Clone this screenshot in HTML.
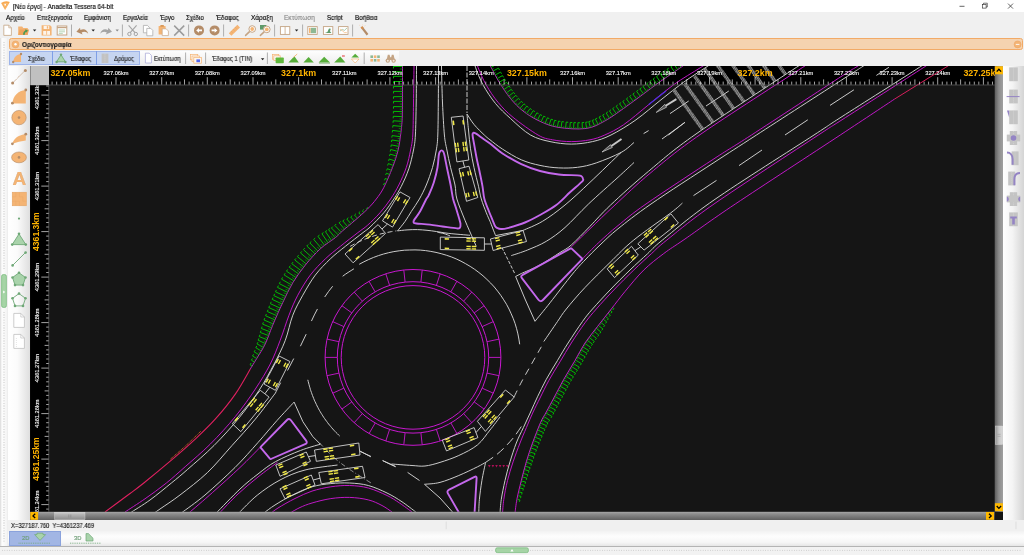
<!DOCTYPE html>
<html lang="el">
<head>
<meta charset="utf-8">
<title>[Νέο έργο] - Anadelta Tessera 64-bit</title>
<style>
html,body{margin:0;padding:0;}
body{width:1024px;height:555px;position:relative;overflow:hidden;background:#f0f0f0;font-family:"Liberation Sans",sans-serif;font-size:6.5px;color:#111;}
.abs{position:absolute;}
.t{position:absolute;white-space:nowrap;line-height:1;transform-origin:0 0;will-change:transform;-webkit-text-stroke:0.14px currentColor;}
#title{left:0;top:0;width:1024px;height:12px;background:#fff;}
#menu{left:0;top:12px;width:1024px;height:11px;background:#f0f0f0;}
#tool{left:0;top:23px;width:1024px;height:15px;background:#f0f0f0;}
.sep{position:absolute;width:1px;background:#8a8a8a;}
#orange{left:9px;top:38px;width:1014px;height:11.5px;background:#f5d3b0;border:1px solid #f2aa66;border-radius:2.5px;box-sizing:border-box;}
#tabs{left:9px;top:51px;width:390px;height:14.5px;background:linear-gradient(#fdfdfd,#ececec);}
#tabsel{left:9.3px;top:50.8px;width:130.4px;height:14.6px;background:#c6d5f1;border:0.6px solid #9db4ea;box-sizing:border-box;}
.tdiv{top:51px;width:0.8px;height:14.2px;background:#7f9fe6;}
#tab2d{left:9px;top:530.5px;width:52px;height:15.2px;background:#a2b6e4;border:0.6px solid #8aa2dc;box-sizing:border-box;}
#lgrip{left:0;top:38px;width:8px;height:508px;background:linear-gradient(90deg,#d8d8d8 0,#fdfdfd 2px,#f4f4f4 7px,#e8e8e8 8px);}
#ltool{left:8px;top:66px;width:22.5px;height:454px;background:linear-gradient(90deg,#fff 0,#fbfbfb 40%,#dcdcdc 100%);}
#rpanel{left:1003px;top:66px;width:21px;height:454px;background:linear-gradient(90deg,#fff 0,#f4f4f4 45%,#d4d4d4 100%);}
#canvas{left:30px;top:66px;width:973px;height:454px;background:#151515;}
#status{left:8px;top:520px;width:1016px;height:10.5px;background:#f0f0f0;}
#btabs{left:8px;top:530.5px;width:1016px;height:15.5px;background:linear-gradient(#f2f2f2 0,#fdfdfd 35%,#f6f6f6 75%,#e6e6e6 100%);}
#bottom{left:0;top:546px;width:1024px;height:9px;background:#f2f2f2;border-top:1px solid #b4b4b4;box-sizing:border-box;}
</style>
</head>
<body>
<div id="title" class="abs"></div>
<div id="menu" class="abs"></div>
<div id="tool" class="abs"></div>
<div id="orange" class="abs"></div>
<div id="tabs" class="abs"></div>
<div id="tabsel" class="abs"></div><div class="abs tdiv" style="left:52px"></div><div class="abs tdiv" style="left:96px"></div>
<div id="lgrip" class="abs"></div>
<div id="ltool" class="abs"></div>
<div id="rpanel" class="abs"></div>
<div id="canvas" class="abs"></div>
<div id="status" class="abs"></div>
<div id="btabs" class="abs"></div>
<div id="tab2d" class="abs"></div>
<div id="bottom" class="abs"></div>
<span class="t" style="left:12.6px;top:3.7px;font-size:6.6px;color:#000;font-weight:normal;transform:scaleX(0.950);white-space:pre">[Νέο έργο] - Anadelta Tessera 64-bit</span>
<span class="t" style="left:6.3px;top:15.1px;font-size:6.5px;color:#000;font-weight:normal;transform:scaleX(0.964);white-space:pre">Αρχείο</span>
<span class="t" style="left:36.8px;top:15.1px;font-size:6.5px;color:#000;font-weight:normal;transform:scaleX(0.940);white-space:pre">Επεξεργασία</span>
<span class="t" style="left:83.8px;top:15.1px;font-size:6.5px;color:#000;font-weight:normal;transform:scaleX(0.952);white-space:pre">Εμφάνιση</span>
<span class="t" style="left:123.3px;top:15.1px;font-size:6.5px;color:#000;font-weight:normal;transform:scaleX(0.936);white-space:pre">Εργαλεία</span>
<span class="t" style="left:160.0px;top:15.1px;font-size:6.5px;color:#000;font-weight:normal;transform:scaleX(0.912);white-space:pre">Έργο</span>
<span class="t" style="left:186.3px;top:15.1px;font-size:6.5px;color:#000;font-weight:normal;transform:scaleX(0.931);white-space:pre">Σχέδιο</span>
<span class="t" style="left:216.0px;top:15.1px;font-size:6.5px;color:#000;font-weight:normal;transform:scaleX(0.973);white-space:pre">Έδαφος</span>
<span class="t" style="left:250.5px;top:15.1px;font-size:6.5px;color:#000;font-weight:normal;transform:scaleX(0.987);white-space:pre">Χάραξη</span>
<span class="t" style="left:283.5px;top:15.1px;font-size:6.5px;color:#8c8c8c;font-weight:normal;transform:scaleX(1.006);white-space:pre">Εκτύπωση</span>
<span class="t" style="left:326.8px;top:15.1px;font-size:6.5px;color:#000;font-weight:normal;transform:scaleX(0.944);white-space:pre">Script</span>
<span class="t" style="left:354.5px;top:15.1px;font-size:6.5px;color:#000;font-weight:normal;transform:scaleX(0.966);white-space:pre">Βοήθεια</span>
<span class="t" style="left:22.0px;top:41.6px;font-size:6.6px;color:#1a1a1a;font-weight:bold;transform:scaleX(0.941);white-space:pre">Οριζοντιογραφία</span>
<span class="t" style="left:27.8px;top:56.1px;font-size:6.3px;color:#222;font-weight:normal;transform:scaleX(0.907);white-space:pre">Σχέδιο</span>
<span class="t" style="left:69.5px;top:56.1px;font-size:6.3px;color:#222;font-weight:normal;transform:scaleX(0.924);white-space:pre">Έδαφος</span>
<span class="t" style="left:114.0px;top:56.1px;font-size:6.3px;color:#222;font-weight:normal;transform:scaleX(0.922);white-space:pre">Δρόμος</span>
<span class="t" style="left:154.0px;top:56.1px;font-size:6.3px;color:#222;font-weight:normal;transform:scaleX(0.891);white-space:pre">Εκτύπωση</span>
<span class="t" style="left:212.3px;top:56.1px;font-size:6.3px;color:#222;font-weight:normal;transform:scaleX(0.913);white-space:pre">Έδαφος 1 (TIN)</span>
<span class="t" style="left:10.7px;top:523.4px;font-size:6.5px;color:#111;font-weight:normal;transform:scaleX(0.903);white-space:pre">X=327187.760  Y=4361237.469</span>
<span class="t" style="left:21.8px;top:536.1px;font-size:5.6px;color:#6c9c74;font-weight:normal;transform:scaleX(1.034);white-space:pre">2D</span>
<span class="t" style="left:73.5px;top:536.1px;font-size:5.6px;color:#6c9c74;font-weight:normal;transform:scaleX(1.048);white-space:pre">3D</span>
<svg class="abs" style="left:0;top:0;will-change:transform" width="1024" height="555" viewBox="0 0 1024 555" font-family="Liberation Sans, sans-serif">
<rect x="49" y="66" width="945.7" height="19.2" fill="#000"/>
<rect x="30.3" y="85" width="18.7" height="426.7" fill="#000"/>
<rect x="30.3" y="66" width="18.7" height="19.2" fill="#c0c0c0"/>
<clipPath id="cv"><rect x="49" y="66" width="945.7" height="445.8"/></clipPath>
<g clip-path="url(#cv)" fill="none" stroke-linecap="butt">
<circle cx="413.0" cy="357.4" r="87.9" stroke="#c818d0" stroke-width="1"/>
<circle cx="413.0" cy="357.4" r="75.7" stroke="#c818d0" stroke-width="1"/>
<circle cx="413.0" cy="357.4" r="71.8" stroke="#c818d0" stroke-width="1"/>
<path d="M420.9 282.1L422.2 270M436.4 285.4L440.2 273.8M450.9 291.8L456.9 281.3M463.7 301.1L471.8 292.1M474.2 312.9L484.1 305.7M482.2 326.6L493.3 321.6M487 341.7L499 339.1M488.7 357.4L500.9 357.4M487 373.1L499 375.7M482.2 388.2L493.3 393.2M474.2 401.9L484.1 409.1M463.7 413.7L471.8 422.7M450.9 423L456.9 433.5M436.4 429.4L440.2 441M420.9 432.7L422.2 444.8M405.1 432.7L403.8 444.8M389.6 429.4L385.8 441M375.2 423L369.1 433.5M362.3 413.7L354.2 422.7M351.8 401.9L341.9 409.1M343.8 388.2L332.7 393.2M339 373.1L327 375.7M337.3 357.4L325.1 357.4M339 341.7L327 339.1M343.8 326.6L332.7 321.6M351.8 312.9L341.9 305.7M362.3 301.1L354.2 292.1M375.1 291.8L369 281.3M389.6 285.4L385.8 273.8M405.1 282.1L403.8 270" stroke="#c818d0" stroke-width="0.9" fill="none" />
<path d="M359.2 264.3 L363.9 261.8 L368.7 259.5 L373.6 257.4 L378.5 255.6 L383.6 254 L388.7 252.7 L393.9 251.6 L399.2 250.8 L404.4 250.2 L409.7 250 L415 249.9 L420.3 250.1 L425.6 250.6 L430.8 251.4 L436 252.4 L441.2 253.7 L446.3 255.2 L451.3 256.9 L456.2 258.9 L461 261.2 L465.6 263.7 L470.2 266.4 L474.6 269.3 L478.9 272.5 L483 275.8 L486.9 279.4 L490.7 283.1 L494.3 287 L497.6 291.1 L500.8 295.4 L503.7 299.8 L506.5 304.3 L509 309 L511.2 313.8 L513.3 318.7 L515.1 323.6 L516.6 328.7 L517.9 333.9 L518.9 339.1 L519.7 344.3" stroke="#d4d4d4" stroke-width="0.95" fill="none" />
<path d="M307.8 379.8 L308.2 381.4 L308.6 383 L309 384.5 L309.4 386.1 L309.9 387.7 L310.3 389.3 L310.8 390.8 L311.4 392.4 L311.9 393.9 L312.5 395.5 L313.1 397 L313.7 398.5 L314.3 400.1 L315 401.6 L315.7 403 L316.4 404.5 L317.1 406 L317.9 407.5 L318.6 408.9 L319.4 410.3 L320.3 411.8 L321.1 413.2 L322 414.6 L322.8 415.9 L323.7 417.3 L324.7 418.7 L325.6 420 L326.6 421.3 L327.6 422.7 L328.6 424 L329.6 425.2 L330.7 426.5 L331.7 427.7 L332.8 429 L333.9 430.2 L335 431.4 L336.2 432.6 L337.3 433.7 L338.5 434.9 L339.7 436" stroke="#d4d4d4" stroke-width="0.95" fill="none" />
<path d="M353.9 268.8 C352 270.1 346.2 273.4 342.6 276.3 C339.1 279.2 335.7 282.8 332.6 286.3 C329.6 289.9 326.8 293.8 324.3 297.6 C321.8 301.4 319.7 304.9 317.5 308.9 C315.3 312.9 313.2 317.1 311.3 321.4 C309.4 325.7 307.9 330.2 306 334.5 C304.1 338.8 302.1 342.9 300 347 C297.9 351.1 295.6 355.1 293.5 359 C291.4 362.9 289.6 366.7 287.5 370.5 C285.4 374.3 283 378.2 281 382 C279 385.8 276.3 391.2 275.4 393.1" stroke="#d4d4d4" stroke-width="0.95" fill="none" stroke-dasharray="13.5 14"/>
<path d="M402.5 55 C402.5 60.2 402.5 75.8 402.5 86 C402.5 96.2 402.5 108.7 402.3 116 C402.1 123.3 401.5 126.8 401.2 130 C400.9 133.2 401.1 131.7 400.6 135 C400.1 138.3 399.5 144.6 398.1 150 C396.8 155.4 394.9 161.2 392.5 167.5 C390.1 173.8 386.5 182.2 383.8 187.5 C381.1 192.8 379 195.4 376.3 199 C373.6 202.6 371.1 205.4 367.5 209 C363.9 212.6 359.2 216.7 355 220.3 C350.8 224 345.8 228 342.5 230.9 C339.2 233.8 339.1 234.6 335.4 237.6 C331.7 240.6 325.3 244.2 320.3 248.8 C315.3 253.4 309.9 259.5 305.3 265.1 C300.7 270.8 296.6 276.4 292.8 282.7 C289 289 286.1 295.6 282.7 302.7 C279.3 309.8 275.6 318.3 272.7 325.2 C269.8 332.1 267.8 338.5 265.2 344 C262.6 349.5 259.5 353.8 257 358 C254.5 362.2 251.4 367.2 250.3 369" stroke="#c818d0" stroke-width="0.95" fill="none" />
<path d="M402.5 61.5L393.5 61.5L393.5 63.5M402.5 66.4L393.5 66.4L393.5 68.4M402.5 71.7L393.5 71.7L393.5 73.7M402.5 76.3L393.5 76.3L393.5 78.3M402.5 81.5L393.5 81.5L393.5 83.5M402.5 86.5L393.5 86.4L393.5 88.4M402.5 91.4L393.5 91.4L393.5 93.4M402.5 96.6L393.5 96.7L393.5 98.7M402.5 101.4L393.5 101.4L393.5 103.4M402.5 106.7L393.5 106.6L393.5 108.6M402.4 111.6L393.4 111.4L393.4 113.4M402.3 116.6L393.3 116.3L393.2 118.3M402 121.3L393.2 120.8L393 122.8M401.6 126.4L392.9 125.6L392.7 127.6M401 131.5L392.5 130.4L392.3 132.4M400.4 136.7L392.1 135.6L391.8 137.6M399.8 141.2L391.8 140L391.5 142M398.9 146.4L391.3 144.9L390.9 146.9M397.8 151.4L390.7 149.5L390.2 151.5M396.4 156L390.1 154.1L389.5 156M394.9 160.9L389.2 159L388.6 160.9M393.3 165.4L388.3 163.6L387.6 165.5M391.4 170.3L387.3 168.7L386.6 170.5M389.6 174.5L386.4 173.2L385.6 175M387.4 179.4L385.3 178.4L384.5 180.3M385.5 183.7L384.3 183.2L383.4 185" stroke="#00c400" stroke-width="0.95" fill="none"/><path d="M402.5 64.1L399.8 64.1M402.5 69L399.8 69M402.5 73.9L399.8 74M402.5 79.2L399.8 79.2M402.5 83.8L399.8 83.8M402.5 88.9L399.8 88.9M402.5 94L399.8 94M402.5 98.8L399.8 98.8M402.5 104.1L399.8 104.1M402.5 109.2L399.8 109.1M402.4 113.9L399.7 113.8M402.2 119.1L399.5 118.9M401.8 124L399.2 123.8M401.3 128.8L398.8 128.5M400.7 134.1L398.2 133.8M400.1 138.7L397.7 138.4M399.4 144L397 143.6M398.4 148.9L396.1 148.4M397.1 153.7L395.1 153.1M395.7 158.4L393.9 157.9M394.2 162.9L392.6 162.3M392.3 167.9L391 167.4M390.5 172.4L389.4 171.9M388.4 177.3L387.6 176.9M386.5 181.4L386 181.2M384.4 186.1L384.2 186" stroke="#00c400" stroke-width="0.8" fill="none" opacity="0.75"/>
<path d="M367.1 209.2L366.5 208.6L368 207.3M363.7 212.4L362.4 210.9L363.8 209.5M360.8 215.1L358.8 212.8L360.2 211.5M357.4 218.2L354.5 215.1L356 213.7M354.2 221L350.7 217L352.2 215.7M350.9 223.8L346.8 219L348.3 217.7M347.6 226.6L342.8 220.9L344.4 219.7M344.5 229.2L339.1 222.8L340.6 221.5M341.2 232.1L334.8 225.4L336.2 224M338.4 235L331.4 228L332.8 226.6M335.1 237.8L328.5 229.6L330.1 228.4M331.5 240.4L325.4 231.6L327 230.5M328.1 242.8L321.9 233.7L323.5 232.6M324.6 245.3L317.9 236.3L319.5 235.1M321.1 248.1L313.7 239.4L315.2 238.1M317.9 251.1L309.8 242.9L311.3 241.5M315.1 253.9L306.8 246L308.2 244.5M311.9 257.3L303.4 249.6L304.8 248.1M309.2 260.4L300.5 252.9L301.8 251.4M306.2 263.9L297.4 256.6L298.7 255.1M303.7 267.1L294.7 259.9L296 258.4M301 270.6L291.8 263.7L293 262.1M298.6 273.9L289.2 267.2L290.4 265.6M296 277.6L286.5 271.2L287.6 269.5M293.9 281L284.1 274.9L285.2 273.2M291.5 284.9L281.6 279.2L282.6 277.4M289.4 288.8L279.3 283.6L280.3 281.8M287.6 292.4L277.5 287.4L278.4 285.6M285.6 296.5L275.5 291.8L276.4 290M283.8 300.3L273.8 295.6L274.7 293.8M282.1 304L272.2 299.4L273 297.6M280.2 308.1L270.4 303.7L271.2 301.8M278.5 311.9L268.8 307.6L269.6 305.7M276.8 315.7L267.3 311.5L268.1 309.7M275 319.9L265.6 315.8L266.4 314M273.2 323.9L264 320L264.8 318.1M271.6 327.8L262.6 324.1L263.4 322.3M270.1 331.8L261.4 328.5L262.1 326.6M268.7 335.6L260.3 332.5L261 330.6M267.1 339.7L259.2 336.6L260 334.7M265.4 343.6L258.1 340.2L258.9 338.4M263.4 347.4L257 343.9L258 342.2M261.3 351.1L255.8 347.7L256.8 346M259 354.8L254.1 351.8L255.2 350.1M256.7 358.5L252.5 356L253.6 354.3M254.5 362.1L251.4 360.2L252.4 358.5M252.2 366L250.1 364.7L251.1 363" stroke="#00c400" stroke-width="0.95" fill="none"/><path d="M365.6 210.6L365.3 210.4M362.1 213.9L361.5 213.3M359.1 216.6L358.3 215.8M355.8 219.6L354.8 218.6M352.5 222.4L351.4 221.1M349.2 225.2L347.9 223.7M346 227.9L344.5 226.1M342.8 230.6L341.1 228.6M339.8 233.5L337.8 231.5M336.5 236.7L334.4 234.4M333.4 239.1L331.5 236.5M329.8 241.6L328 238.9M326.4 244L324.4 241.3M322.8 246.6L320.7 244M319.6 249.4L317.3 246.9M316.5 252.5L314 250.1M313.3 255.8L310.8 253.4M310.6 258.9L308 256.6M307.9 262L305.2 259.8M305 265.5L302.3 263.3M302.5 268.7L299.8 266.5M299.8 272.3L297 270.2M297.2 275.9L294.3 274M294.9 279.3L292 277.4M292.5 283.1L289.6 281.4M290.6 286.6L287.6 285M288.5 290.6L285.5 289.1M286.7 294.2L283.7 292.8M284.7 298.4L281.7 297M282.9 302.2L279.9 300.8M281.2 305.8L278.3 304.4M279.3 310L276.4 308.7M277.6 313.8L274.8 312.5M275.8 318L272.9 316.8M274.2 321.7L271.4 320.5M272.5 325.7L269.7 324.6M270.9 329.8L268.2 328.7M269.4 333.7L266.8 332.7M267.8 337.9L265.4 337M266.2 341.9L263.9 340.9M264.5 345.5L262.4 344.5M262.4 349.3L260.6 348.2M260 353.2L258.5 352.2M257.7 356.8L256.4 356M255.5 360.6L254.4 359.9M253.3 364.1L252.5 363.7M251.2 367.6L250.7 367.2" stroke="#00c400" stroke-width="0.8" fill="none" opacity="0.75"/>
<path d="M250.3 369 C247.8 373.2 241.2 385.7 235.3 394.1 C229.5 402.5 221.9 411.7 215.2 419.2 C208.5 426.7 202.3 432.5 195.2 439.2 C188.1 445.9 181.2 451.9 172.6 459.2 C164 466.5 150.9 477.3 143.8 483 C136.7 488.7 136.5 488.7 130 493.5 C123.5 498.3 109.2 508.9 105 512" stroke="#e02060" stroke-width="1.1" fill="none" />
<path d="M201 431 C198.6 433.3 191.7 440.2 186.5 445 C181.3 449.8 172.8 457.1 170 459.5" stroke="#e06828" stroke-width="1.0" fill="none" stroke-dasharray="1 0.8"/>
<path d="M414 55 C414 57 414.1 59 414 67 C413.9 75 413.7 91.7 413.5 103 C413.3 114.3 413.3 127.2 412.8 135 C412.3 142.8 411.7 144.6 410.6 150 C409.5 155.4 408.3 161.7 406.3 167.5 C404.3 173.3 401.4 179.8 398.8 185 C396.2 190.2 393.7 194.4 390.6 199 C387.5 203.6 383.9 208.4 380 212.8 C376.1 217.2 371.2 222 367.5 225.3 C363.8 228.6 362.4 229.1 357.9 232.6 C353.4 236.1 345.8 241.9 340.4 246.3 C335 250.7 330.3 254.1 325.3 258.9 C320.3 263.7 314.9 269.1 310.3 275.1 C305.7 281.2 301.4 288.5 297.8 295.2 C294.2 301.9 291.9 307.7 289 315.2 C286.1 322.7 283.3 332.2 280.2 340.3 C277.1 348.4 274.4 355.9 270.3 364 C266.2 372.1 261.1 380.3 255.3 389.1 C249.5 397.9 242.8 407.4 235.3 416.6 C227.8 425.8 218.5 435.9 210.2 444.2 C201.8 452.5 192.5 460.2 185.2 466.7 C177.9 473.2 173.1 477.6 166.4 483 C159.7 488.4 151.9 494 145 498.8 C138.1 503.6 128.3 509.8 125 512" stroke="#c818d0" stroke-width="0.95" fill="none" />
<path d="M416.5 55 C416.5 57 416.6 59 416.5 67 C416.4 75 416.4 91.7 416.2 103 C416 114.3 415.8 127.2 415.4 135 C414.9 142.8 414.6 144.4 413.5 150 C412.4 155.6 410.8 162.8 408.8 168.8 C406.8 174.9 403.8 181.3 401.3 186.3 C398.8 191.3 396.7 194.6 393.8 199 C390.9 203.4 387.8 208.1 383.8 212.8 C379.8 217.5 373.5 223.8 370 227.1 C366.5 230.4 367.1 229.4 363 232.6 C358.9 235.8 350.8 241.9 345.4 246.3 C339.9 250.7 335.3 254.1 330.3 258.9 C325.3 263.7 319.9 269.1 315.3 275.1 C310.7 281.2 306.6 288.5 302.8 295.2 C299.1 301.9 295.7 307.7 292.8 315.2 C289.9 322.7 288.4 332.2 285.3 340.3 C282.2 348.4 278.5 355.7 274.1 364 C269.7 372.3 265 381.3 259.1 390.3 C253.3 399.3 246.5 408.7 239 417.9 C231.5 427.1 222.6 436.9 214 445.5 C205.4 454.1 194.8 463.1 187.7 469.3 C180.6 475.6 177.7 477.9 171.4 483 C165.1 488.1 156.9 495 150 500 C143.1 505 133.3 510.8 130 513" stroke="#d4d4d4" stroke-width="0.95" fill="none" />
<path d="M438.5 55 C438.5 57 438.5 59 438.5 67 C438.5 75 438.4 91.7 438.3 103 C438.2 114.3 438.1 127.2 437.8 135 C437.5 142.8 437.2 144.6 436.3 150 C435.4 155.4 434.2 161.7 432.5 167.5 C430.8 173.3 428.5 179.8 426.3 185 C424.1 190.2 421.9 194.6 419.4 199 C416.9 203.4 413.7 207.8 411.3 211.5 C408.9 215.2 407.3 218.3 405 221.5 C402.7 224.7 398.8 229.3 397.5 230.9" stroke="#d4d4d4" stroke-width="0.95" fill="none" />
<path d="M441.5 55 C441.5 57 441.3 59 441.5 67 C441.7 75 442 91.7 442.5 103 C443 114.3 443.7 127.2 444.4 135 C445.1 142.8 445.9 144.6 446.9 150 C447.9 155.4 449.2 161.7 450.6 167.5 C452 173.3 453.9 179.8 455 185 C456.1 190.2 455.2 193.1 456.9 199 C458.6 204.9 462.3 213.6 465 220.3 C467.7 227 471.2 234.6 473.1 239 C475 243.4 475.8 245.2 476.3 246.5" stroke="#d4d4d4" stroke-width="0.95" fill="none" />
<path d="M413.6 221 C413.7 220.8 413.3 221.2 414.4 219.6 C415.5 218 418 214.9 420 211.5 C422 208.1 424.8 201.8 426.3 199 C427.8 196.2 427.6 197.8 428.8 195 C430.1 192.2 432.4 187.1 433.8 182.5 C435.2 177.9 436.7 172.1 437.5 167.5 C438.3 162.9 438.4 157.7 438.8 155 C439.2 152.3 439.5 152.3 440 151.5 C440.5 150.7 441.1 150.4 441.6 150.4 C442.1 150.4 442.7 150.7 443.2 151.5 C443.7 152.3 443.8 152.3 444.4 155 C445 157.7 445.9 162.5 446.9 167.5 C447.9 172.5 449.6 179.8 450.6 185 C451.6 190.2 452.2 195 453.1 199 C454.1 203 455.2 205.2 456.3 209 C457.4 212.8 459.3 218.8 460 221.5 C460.7 224.2 460.5 224.4 460.6 225" stroke="#c468ec" stroke-width="1.9" fill="none" stroke-linejoin="round"/>
<path d="M460.6 225 C460.5 225.4 460.6 226.9 460 227.5 C459.4 228.1 459.8 228.6 456.9 228.4 C454 228.2 447 227.1 442.5 226.5 C438 225.9 434.4 225.1 430 224.6 C425.6 224.1 419 223.8 416.3 223.5 C413.6 223.2 414.2 223.2 413.8 222.8 C413.4 222.4 413.6 221.3 413.6 221" stroke="#c468ec" stroke-width="1.9" fill="none" stroke-linejoin="round"/>
<path d="M350.2 246.3 L352.3 245.2 L354.5 244 L356.7 242.9 L358.9 241.8 L361.1 240.8 L363.3 239.9 L365.6 238.9 L367.9 238 L370.2 237.2 L372.5 236.4 L374.8 235.6 L377.2 234.9 L379.5 234.3 L381.9 233.6 L384.3 233.1 L386.7 232.5 L389.1 232.1 L391.5 231.6 L393.9 231.2 L396.3 230.9" stroke="#d4d4d4" stroke-width="0.95" fill="none" stroke-dasharray="5 3"/>
<path d="M397.5 230.9 C399.1 230.7 403.7 230.1 407 229.9 C410.3 229.7 414.2 229.5 417.5 229.6 C420.8 229.7 423.9 230 427 230.3 C430.1 230.6 432.7 231 436.3 231.5 C439.9 232 443.2 232.8 448.8 233.4 C454.4 234 466.5 235 470 235.3" stroke="#d4d4d4" stroke-width="0.95" fill="none" />
<path d="M437.5 232.3 C438.6 232.5 441.9 233 444 233.6 C446.1 234.2 449 235.5 450 235.9" stroke="#d4d4d4" stroke-width="0.95" fill="none" />
<path d="M467 66 L467 113" stroke="#d4d4d4" stroke-width="0.95" fill="none" stroke-dasharray="5 1.5"/>
<path d="M467 114 C467.2 116.7 467.9 124.2 468.5 130 C469.1 135.8 469.6 142.6 470.5 148.8 C471.4 155.1 472.7 161.2 474 167.5 C475.3 173.8 477.3 181.1 478.5 186.3 C479.7 191.6 480 194.6 481.3 199 C482.6 203.4 484.9 209.1 486.3 212.8 C487.8 216.5 489.4 219.9 490 221.3" stroke="#d4d4d4" stroke-width="0.95" fill="none" />
<path d="M275.4 393.1 C272 397.5 262.5 410.5 255.3 419.2 C248.1 427.9 240 436.6 232 445.5 C224 454.4 216.2 464.2 207.5 472.5 C198.8 480.8 187.9 488.9 180 495 C172.1 501.1 165 505.5 160 509 C155 512.5 151.7 514.8 150 516" stroke="#d4d4d4" stroke-width="0.95" fill="none" />
<path d="M294.1 402.1 L302.9 421.7 L312.9 436.7 L320.4 444.2" stroke="#d4d4d4" stroke-width="0.95" fill="none" />
<path d="M294.1 402.1 C291.2 405.2 283 413.8 277 420.5 C271 427.2 265 434.7 258 442.5 C251 450.3 243.8 458.8 235 467.5 C226.2 476.2 213.9 487.4 205 495 C196.1 502.6 185.2 510 181.3 513" stroke="#d4d4d4" stroke-width="0.95" fill="none" />
<path d="M260.3 447.2 C256.9 450.6 248 459.9 240 467.5 C232 475.1 221 484.9 212.5 492.5 C204 500.1 192.8 509.6 188.8 513" stroke="#c818d0" stroke-width="0.95" fill="none" />
<path d="M290.9 420.3Q289.1 417.9 287 420L260.7 446.8Q260.3 447.2 260.7 447.7L269.9 458.7Q270.3 459.2 270.9 459L305.1 444.2Q307.9 443 306.1 440.6Z" stroke="#c468ec" stroke-width="1.9" fill="none" stroke-linejoin="round"/>
<path d="M320.4 444.2 C317.1 445.2 307.9 447.6 300.4 450.5 C292.9 453.4 282.5 457.8 275.4 461.7 C268.3 465.6 263.9 469.4 258 474 C252.1 478.6 246.9 482.5 240 489 C233.1 495.5 220.2 509 216.3 513" stroke="#d4d4d4" stroke-width="0.95" fill="none" />
<path d="M277.5 462.3 C274.2 464.8 264.6 471.7 258 477 C251.4 482.3 244.4 488 238 494 C231.6 500 222.6 509.8 219.5 513" stroke="#c818d0" stroke-width="0.95" fill="none" />
<path d="M337.5 465 C332.1 465.8 314.6 467.5 305 470 C295.4 472.5 287.9 475.8 280 480 C272.1 484.2 264.4 489.5 257.5 495 C250.6 500.5 241.9 510 238.8 513" stroke="#d4d4d4" stroke-width="0.95" fill="none" />
<path d="M415.8 512 C413.5 510.3 406.8 505 402 501.8 C397.2 498.6 392.6 495.7 387 493 C381.4 490.3 374.6 487.2 368.3 485.5 C362.1 483.8 355.8 483.3 349.5 483 C343.2 482.7 337.1 483 330.8 483.6 C324.6 484.2 318.4 484.9 312 486.8 C305.6 488.7 298.7 492 292.5 495 C286.3 498 279.8 502 275 505 C270.2 508 265.7 511.7 263.8 513" stroke="#d4d4d4" stroke-width="0.95" fill="none" />
<path d="M412 512 C409.9 510.5 403.7 505.8 399.5 503 C395.3 500.2 392.2 498 387 495.5 C381.8 493 374.6 489.7 368.3 488 C362.1 486.3 355.8 485.7 349.5 485.5 C343.2 485.3 337.1 485.9 330.8 486.8 C324.6 487.7 318 489.2 312 491.1 C306 493.1 300.7 495.7 295 498.5 C289.3 501.3 282.2 505.4 278 508 C273.8 510.6 271.3 513 270 514" stroke="#c818d0" stroke-width="0.95" fill="none" />
<path d="M392 512 C390.3 510.9 385.9 507.5 382 505.5 C378.1 503.5 373.7 501.2 368.3 499.9 C362.9 498.5 355.8 497.6 349.5 497.4 C343.2 497.2 337.1 497.7 330.8 498.6 C324.6 499.5 317.1 501.5 312 503 C306.9 504.5 303.7 505.8 300 507.5 C296.3 509.2 291.7 512.1 290 513" stroke="#c818d0" stroke-width="0.95" fill="none" />
<path d="M360.1 451.4 L370.9 456.4" stroke="#d4d4d4" stroke-width="0.95" fill="none" />
<path d="M382.7 460.7 L395.2 466.4" stroke="#d4d4d4" stroke-width="0.95" fill="none" />
<path d="M360.1 451.1 L370.8 456.8" stroke="#d4d4d4" stroke-width="0.95" fill="none" />
<path d="M382.6 460.5 L395.8 466.8" stroke="#d4d4d4" stroke-width="0.95" fill="none" />
<path d="M407.6 472.4 L419.5 480.5" stroke="#d4d4d4" stroke-width="0.95" fill="none" />
<path d="M319.5 443 C322 445.5 329.5 453.6 334.5 458 C339.5 462.4 343.2 465 349.5 469.3 C355.8 473.6 368.2 481.2 372 483.6" stroke="#c4c4c4" stroke-width="0.7" fill="none" stroke-dasharray="5 2 1 2"/>
<path d="M424.5 484.3 C427.1 484 434.3 483.9 440 482.4 C445.7 480.9 452.6 478.1 458.8 475.5 C465.1 472.9 473 469 477.5 466.8 C482 464.6 484.2 463.1 485.6 462.4" stroke="#d4d4d4" stroke-width="0.95" fill="none" />
<path d="M424.5 484.3 L440 498 L452.5 512" stroke="#d4d4d4" stroke-width="0.95" fill="none" />
<path d="M485.6 462.4 C485 465.4 482.9 474.4 481.9 480.5 C480.9 486.6 479.9 494.1 479.4 499.3 C478.9 504.6 478.9 509.9 478.8 512" stroke="#d4d4d4" stroke-width="0.95" fill="none" />
<path d="M463 518Q462 518 461.5 517.1L448 493.6Q446.5 491 449.2 489.7L474.6 476.9Q476.8 475.8 476.6 478.3L474.3 517Q474.2 518 473.2 518Z" stroke="#c468ec" stroke-width="1.9" fill="none" stroke-linejoin="round"/>
<path d="M485.6 462.4 C487.4 461.1 493.1 457.5 496.3 454.9 C499.5 452.3 502.1 450 505 447 C507.9 444 511 440.8 514 437 C517 433.2 521.5 426.2 523 424" stroke="#d4d4d4" stroke-width="0.95" fill="none" stroke-dasharray="9 5"/>
<path d="M488 465L490.6 465L489.3 467.6ZM491.6 465L494.2 465L492.9 467.6ZM495.2 465L497.8 465L496.5 467.6ZM498.8 465L501.4 465L500.1 467.6ZM502.4 465L505 465L503.7 467.6ZM506 465L508.6 465L507.3 467.6Z" fill="#b01058" stroke="none"/>
<path d="M391.4 464 C394.8 464.2 406.4 465.2 412 465.5 C417.6 465.8 420.3 466.5 425 466 C429.7 465.5 434.4 464.1 440 462.4 C445.6 460.6 452.6 458.4 458.8 455.5 C465.1 452.6 472.3 449.1 477.5 444.9 C482.7 440.6 486.2 434.6 490 430 C493.8 425.4 498.3 419.2 500 417" stroke="#d4d4d4" stroke-width="0.95" fill="none" />
<path d="M612.6 307.4L613.9 308.5L612.7 310M610.2 310.4L612.1 311.8L610.9 313.3M608 313.2L610.3 315.1L609.1 316.6M605.4 316.4L608.4 318.7L607.2 320.2M603.2 319.2L606.7 321.9L605.5 323.4M600.7 322.4L604.7 325.5L603.5 327M598.4 325.4L602.9 328.9L601.7 330.4M596.1 328.2L600.9 332L599.8 333.5M593.8 331.2L598.8 335.1L597.6 336.5M591.3 334.3L596.4 338.3L595.3 339.8M589 337.4L594.3 341.4L593.1 343M586.9 340.2L592.5 344.1L591.4 345.7M584.7 343.4L590.6 347.3L589.5 348.9M582.6 346.8L588.6 350.4L587.7 352M580.9 349.9L587 353.3L586.1 354.9M579 353.4L585.1 356.7L584.2 358.4M577 356.9L583.2 360.3L582.3 361.9M575.3 360L581.3 363.5L580.4 365.2M573.2 363.5L579.2 367.1L578.3 368.7M571.4 366.5L577.4 370.2L576.4 371.8M569.5 369.6L575.5 373.2L574.5 374.9M567.4 373.1L573.4 376.7L572.4 378.4M565.6 376.2L571.6 379.8L570.6 381.4M563.5 379.7L569.6 383.2L568.7 384.8M561.8 382.9L567.9 386.3L567 388M560 386.2L566.2 389.5L565.3 391.2M558.1 389.9L564.3 393.1L563.4 394.8M556.4 393L562.6 396.3L561.8 397.9M554.7 396.4L560.8 399.7L559.9 401.4M553 399.6L559.1 402.9L558.2 404.5M551.1 403L557.3 406.3L556.4 408M549.2 406.6L555.4 409.9L554.5 411.6M547.6 409.6L553.8 412.9L552.9 414.6M545.8 413L551.9 416.4L550.9 418M543.7 416.5L549.6 420.1L548.6 421.7M541.8 419.8L547.9 422.9L547 424.6M540.3 423L546.5 425.7L545.8 427.5M538.8 426.7L544.9 429.3L544.2 431M537.4 430L543.5 432.5L542.8 434.2M536 433.6L542.1 435.9L541.4 437.7M534.7 437.1L540.6 439.4L540 441.2M533.4 440.6L539.2 442.8L538.6 444.6M532 444.5L537.7 446.6L537.1 448.4M530.8 447.9L536.4 449.9L535.8 451.7M529.4 451.8L535 453.6L534.4 455.4M528.4 455.1L533.8 456.9L533.3 458.7M527.2 458.9L532.5 460.6L532 462.4M526.2 462.3L531.4 463.9L530.9 465.7M525 466.2L530.1 467.6L529.5 469.5M524.1 469.5L529 470.9L528.5 472.7M523 473.4L527.7 474.7L527.3 476.5M522.1 476.9L526.7 478L526.3 479.9M521.2 481L525.5 481.9L525.1 483.8M520.4 484.6L524.4 485.4L524 487.3M519.8 488L523.3 488.7L522.9 490.6M519 492L522.1 492.6L521.7 494.5M518.3 495.8L520.9 496.3L520.6 498.2M517.6 499.5L519.9 499.9L519.5 501.8" stroke="#00c400" stroke-width="0.95" fill="none"/><path d="M611.4 308.9L611.8 309.3M609 312L609.6 312.5M606.5 315L607.3 315.6M604.3 317.8L605.3 318.5M601.8 321L602.9 321.9M599.7 323.7L600.9 324.7M597.2 326.9L598.6 328.1M594.8 329.9L596.3 331.1M592.6 332.8L594.1 333.9M590.1 335.9L591.7 337.1M587.8 339L589.4 340.2M585.8 341.8L587.5 342.9M583.6 345.1L585.4 346.2M581.6 348.6L583.4 349.6M579.9 351.6L581.8 352.6M578 355.1L579.9 356.1M576.3 358.2L578.1 359.3M574.3 361.8L576.1 362.8M572.5 364.8L574.3 365.9M570.3 368.3L572.1 369.4M568.5 371.4L570.3 372.5M566.3 374.9L568.2 376M564.5 378L566.4 379M562.8 381.1L564.6 382.1M560.8 384.8L562.6 385.8M559.1 388L560.9 389M557.4 391.2L559.2 392.2M555.5 394.7L557.4 395.7M553.8 398L555.7 399M551.9 401.5L553.8 402.5M550.1 404.8L552 405.8M548.5 407.9L550.4 408.9M546.5 411.6L548.4 412.6M544.8 414.7L546.6 415.7M542.8 418.1L544.6 419.1M541.1 421.4L542.9 422.3M539.5 425L541.3 425.7M538 428.6L539.8 429.3M536.6 432L538.4 432.7M535.2 435.6L537 436.3M533.9 439.2L535.7 439.8M532.7 442.5L534.4 443.2M531.4 446L533.2 446.6M530.1 449.9L531.8 450.4M529 453.2L530.6 453.8M527.8 457L529.4 457.5M526.6 460.8L528.2 461.3M525.6 464.2L527.1 464.7M524.5 468.1L526 468.5M523.5 471.5L525 471.9M522.5 475.4L523.9 475.7M521.7 478.9L523 479.3M520.9 482.5L522.1 482.7M520.1 486.3L521.2 486.5M519.3 490.3L520.3 490.5M518.7 493.7L519.6 493.9M517.9 497.8L518.7 497.9M517.3 501.3L517.9 501.4" stroke="#00c400" stroke-width="0.8" fill="none" opacity="0.75"/>
<path d="M541.3 346.8 C539.6 349.8 534.2 359.3 531 365 C527.8 370.7 524.9 375.6 522 381 C519.1 386.4 515.2 394.7 513.8 397.4" stroke="#d4d4d4" stroke-width="0.95" fill="none" stroke-dasharray="7 5.5"/>
<path d="M485 55 C486 57 488.7 62.8 491.1 67.3 C493.5 71.8 496.1 77.1 499.3 82.3 C502.5 87.5 506.6 93.7 510.5 98.5 C514.5 103.3 518.2 107.2 523 111 C527.8 114.8 533.5 118.3 539.3 121 C545.1 123.7 550.2 126 558 127.3 C565.8 128.6 578.2 129.6 586 128.5 C593.8 127.5 598.5 124.3 604.8 121 C611 117.7 617.2 112.9 623.5 108.5 C629.8 104.1 636 99.4 642.3 94.8 C648.5 90.2 654.5 85.6 661 81 C667.5 76.4 674.5 71.8 681 67.3 C687.5 62.8 696.8 56.2 700 54" stroke="#c818d0" stroke-width="0.95" fill="none" />
<path d="M485.6 56.1L491.1 53.4L492 55.2M487.4 60L493 57.2L493.9 59M489.2 63.6L494.8 60.8L495.7 62.6M491.1 67.3L496.6 64.4L497.5 66.2M493 71L498.5 68.2L499.5 70M495.1 75L500.6 72.1L501.5 73.8M497.1 78.6L502.5 75.6L503.5 77.3M499.3 82.3L504.6 79L505.6 80.7M501.4 85.6L506.6 82.3L507.7 84M503.9 89.5L509.1 86L510.2 87.7M506.3 92.9L511.3 89.3L512.5 91M508.7 96.2L513.6 92.4L514.8 94M511.2 99.3L515.9 95.3L517.2 96.9M513.9 102.4L518.5 98.3L519.8 99.8M517 105.7L521.3 101.3L522.8 102.7M519.9 108.4L524 103.8L525.5 105.1M523 111L526.8 106.1L528.4 107.4M526.5 113.6L530.1 108.5L531.7 109.7M529.9 115.8L533.2 110.6L534.9 111.7M533.8 118.2L536.9 112.8L538.6 113.8M537.5 120.1L540.2 114.6L542 115.5M541.1 121.8L543.7 116.2L545.5 117M545 123.6L547.4 117.8L549.3 118.6M549.1 125.1L551.1 119.2L553 119.9M553 126.3L554.6 120.3L556.5 120.8M557.4 127.2L558.5 121.1L560.4 121.4M561.1 127.8L561.9 121.6L563.9 121.9M565.6 128.3L566.2 122.1L568.2 122.3M569.8 128.6L570.3 122.4L572.3 122.6M573.6 128.8L573.9 122.6L575.9 122.7M577.9 128.9L577.9 122.7L579.9 122.8M582.4 128.8L582.1 122.6L584.1 122.5M586.6 128.4L585.7 122.3L587.7 122M590.4 127.6L588.8 121.6L590.7 121.1M594.6 126.2L592.3 120.4L594.2 119.7M598.2 124.6L595.4 119L597.2 118.1M602.1 122.5L599.1 117L600.9 116.1M605.7 120.5L602.7 115.1L604.4 114.1M609.5 118.3L606.2 113L607.9 111.9M612.9 116L609.4 110.9L611 109.8M616.3 113.6L612.7 108.6L614.3 107.4M619.7 111.2L616.1 106.2L617.7 105M623.1 108.8L619.5 103.7L621.1 102.6M626.4 106.5L622.8 101.4L624.4 100.3M630 103.8L626.4 98.8L628 97.6M633.3 101.4L629.6 96.4L631.2 95.3M636.6 99L632.9 94L634.5 92.8M640.3 96.3L636.6 91.3L638.2 90.1M643.5 93.9L639.8 88.9L641.5 87.7M646.8 91.5L643 86.5L644.6 85.3M650.4 88.8L646.7 83.8L648.3 82.6M653.6 86.4L649.9 81.4L651.5 80.2M656.9 84L653.2 79L654.8 77.8M660.2 81.6L656.5 76.6L658.2 75.4M663.9 79L660.3 73.9L662 72.8M667.2 76.7L663.7 71.6L665.3 70.5M670.6 74.4L667.1 69.3L668.7 68.2M674.4 71.8L670.9 66.7L672.5 65.6M677.7 69.6L674.2 64.4L675.9 63.3M681 67.3L677.5 62.2L679.1 61.1M684.6 64.8L681.1 59.7L682.7 58.6M688 62.5L684.4 57.4L686 56.2M691.3 60.1L687.7 55L689.4 53.9M694.8 57.6L691.3 52.6L692.9 51.4M698.2 55.3L694.6 50.2L696.2 49.1" stroke="#00c400" stroke-width="0.95" fill="none"/><path d="M486.5 58.1L488.2 57.3M488.4 62L490.1 61.2M490.3 65.7L492 64.9M492.2 69.4L493.8 68.5M494.2 73.2L495.8 72.4M496.1 76.8L497.7 75.9M498.2 80.5L499.8 79.5M500.3 83.9L501.9 82.9M502.5 87.3L504 86.3M505.1 91.2L506.6 90.2M507.5 94.6L509 93.5M509.9 97.8L511.3 96.6M512.5 100.9L513.9 99.7M515.6 104.2L516.9 103M518.4 107L519.7 105.7M521.4 109.7L522.6 108.3M524.9 112.5L526 111M528.2 114.7L529.2 113.2M532.1 117.2L533 115.6M535.6 119.2L536.5 117.5M539.3 121L540.1 119.3M543.3 122.8L544 121.1M546.8 124.3L547.5 122.5M551 125.7L551.5 123.9M555.1 126.8L555.5 124.9M559.3 127.5L559.6 125.7M563.6 128.1L563.8 126.2M567.7 128.5L567.9 126.6M571.5 128.7L571.6 126.9M575.8 128.9L575.8 127.1M579.9 128.9L579.9 127.1M584.3 128.7L584.1 126.8M588.3 128.1L587.9 126.3M592.3 127L591.7 125.3M596.4 125.4L595.6 123.7M600.3 123.4L599.4 121.8M603.9 121.5L603 119.9M607.4 119.6L606.4 118M611.2 117.2L610.2 115.6M614.6 114.8L613.5 113.3M618 112.4L616.9 110.9M621.4 110L620.3 108.5M624.7 107.6L623.7 106.1M628.4 105L627.3 103.5M631.7 102.6L630.6 101.1M634.9 100.2L633.8 98.7M638.2 97.8L637.1 96.3M641.9 95.1L640.8 93.6M645.1 92.7L644 91.2M648.4 90.3L647.2 88.8M652 87.6L650.9 86.1M655.2 85.2L654.1 83.7M658.5 82.8L657.4 81.3M662.2 80.1L661.1 78.6M665.5 77.8L664.5 76.3M668.9 75.6L667.8 74M672.2 73.3L671.2 71.7M676 70.7L675 69.2M679.4 68.4L678.3 66.9M682.8 66.1L681.7 64.6M686.5 63.5L685.4 61.9M689.9 61.1L688.8 59.6M693.1 58.8L692 57.3M696.4 56.5L695.4 55M700 54L698.9 52.5" stroke="#00c400" stroke-width="0.8" fill="none" opacity="0.75"/>
<path d="M475 55 C475.5 57 476.1 62.3 478 67.3 C479.9 72.3 482.8 79 486.1 84.8 C489.4 90.6 493.5 96.9 498 102.3 C502.5 107.7 506.3 111.8 513 117.3 C519.7 122.8 531.4 131.2 538 135 C544.6 138.8 547 138.7 552.5 139.8 C558 140.9 565 141.6 571.3 141.6 C577.5 141.6 584.4 140.9 590 139.8 C595.6 138.7 599.2 137.5 604.8 135 C610.4 132.5 616.2 129.8 623.5 124.8 C630.8 119.8 640.2 111.5 648.5 104.8 C656.8 98.1 664.8 91 673.5 84.8 C682.2 78.5 693.2 72.3 701 67.3 C708.8 62.3 716.8 57 720 55" stroke="#c818d0" stroke-width="0.95" fill="none" />
<path d="M472.5 55 C473 57 473.8 62.3 475.5 67.3 C477.2 72.3 479.7 78.8 483 84.8 C486.3 90.8 490.9 97.9 495.5 103.5 C500.1 109.1 504.7 113.2 510.5 118.5 C516.3 123.8 523.9 131.2 530.5 135 C537.1 138.8 543.2 140.1 550 141.6 C556.8 143.1 564.2 144.1 571.3 144.1 C578.4 144.1 585.9 143.1 592.5 141.6 C599.1 140.1 603.8 138.6 611 135 C618.2 131.4 627.7 125.7 636 119.8 C644.3 113.9 653.1 106 661 99.8 C668.9 93.5 676 87.7 683.5 82.3 C691 76.9 699.2 71.8 706 67.3 C712.8 62.8 721 57 724 55" stroke="#d4d4d4" stroke-width="0.95" fill="none" />
<path d="M648.5 104.8 L666 91" stroke="#5030e0" stroke-width="1.1" fill="none" />
<path d="M467 114.1 C468.2 115.9 471.4 121.3 474.3 124.8 C477.2 128.3 481.7 132.5 484.3 135 C486.9 137.5 487 137.5 490 139.8 C493 142.2 497.3 145.8 502.5 149.1 C507.7 152.4 515 157.1 521.3 159.8 C527.5 162.5 533.8 164.1 540 165.4 C546.2 166.8 552.5 167.6 558.8 167.9 C565 168.2 571.2 168.1 577.5 167.3 C583.8 166.5 589 165.4 596.3 162.9 C603.5 160.4 614.7 155.9 621 152.5 C627.3 149.1 631.8 144.2 634 142.5" stroke="#d4d4d4" stroke-width="0.95" fill="none" />
<path d="M490 221.3 C490.5 222.6 492.1 226.6 493 229 C493.9 231.4 495.2 234.5 495.6 235.6" stroke="#d4d4d4" stroke-width="0.95" fill="none" />
<path d="M495.6 235.6 L523 230.4" stroke="#d4d4d4" stroke-width="0.95" fill="none" />
<path d="M523 230.4 C526.2 228.9 535.5 225.5 542.5 221.3 C549.5 217.1 557.1 211.5 565 205 C572.9 198.5 580.7 191.1 590 182.3 C599.3 173.6 615.8 157.5 621 152.5" stroke="#d4d4d4" stroke-width="0.95" fill="none" />
<path d="M473.6 132.8 C474.2 132.7 474.9 133 476 133.6 C477.1 134.2 477.7 134.8 480 136.5 C482.3 138.2 486.2 140.7 490 143.5 C493.8 146.3 497.3 150.1 502.5 153.5 C507.7 156.9 515 161.2 521.3 164.1 C527.5 167 533.8 169.3 540 171 C546.2 172.7 552.5 173.8 558.8 174.5 C565 175.2 573.7 175.1 577.5 175.4 C581.3 175.7 580.6 175.7 581.5 176.3 C582.4 176.9 582.9 178.1 583 179 C583.1 179.9 584.2 179.4 582 181.6 C579.8 183.8 574.3 188.4 570 192.3 C565.7 196.2 561.3 201.2 556.3 205 C551.3 208.8 545.2 212.1 540 215 C534.8 217.9 530.4 220.3 525 222.5 C519.6 224.7 511.5 227 507.5 228.1 C503.5 229.2 502.7 229 501 229 C499.3 229 498.5 228.7 497.5 228.2 C496.5 227.7 495.8 227.4 495 226 C494.2 224.6 493.5 222.4 492.5 220 C491.5 217.6 490.4 215 489 211.5 C487.6 208 485.5 203.2 484.4 199 C483.3 194.8 483.3 190.9 482.5 186.3 C481.7 181.7 480.5 176.1 479.5 171.3 C478.5 166.5 477.4 162.3 476.5 157.5 C475.6 152.7 474.4 145.9 473.8 142.5 C473.2 139.1 473 138.4 472.8 137 C472.6 135.6 472.5 134.7 472.6 134 C472.7 133.3 473 132.9 473.6 132.8Z" stroke="#c468ec" stroke-width="1.9" fill="none" stroke-linejoin="round"/>
<path d="M511.3 255.6 C514 254.7 521.7 252.4 527.5 250 C533.3 247.6 540 245.1 546.3 241.3 C552.5 237.6 558 233.7 565 227.5 C572 221.3 579.7 212.4 588.5 204 C597.3 195.6 610.4 184.2 618 177.3 C625.6 170.4 631.3 165 634 162.5" stroke="#d4d4d4" stroke-width="0.95" fill="none" />
<path d="M521.3 273.5 C524.4 272.1 533.5 268.5 540 265 C546.5 261.5 554.8 255.8 560 252.5 C565.2 249.2 566.3 249.4 571.3 245 C576.3 240.6 583.5 233 590 226.3 C596.5 219.6 600.9 214.2 610.6 205 C620.4 195.8 634.3 183.1 648.5 171.3 C662.7 159.5 671.3 151.3 696 134 C720.7 116.7 776.5 80.5 796.5 67.3 C816.5 54.1 812.8 57 816 55" stroke="#d4d4d4" stroke-width="0.95" fill="none" />
<path d="M571.3 246.9 C574.4 243.9 582.7 235.8 590 228.8 C597.3 221.8 604.8 214.4 615 205 C625.2 195.6 636.7 184.3 651 172.5 C665.3 160.7 675.7 151.5 701 134 C726.3 116.5 782.6 80.5 802.8 67.3 C823 54.1 818.8 57 822 55" stroke="#c818d0" stroke-width="0.95" fill="none" />
<path d="M582.5 258.8 C585.2 256.1 592.9 248 598.8 242.5 C604.7 237 610.1 232 618 225.6 C625.9 219.2 630 215.1 646 204 C662 192.9 696.4 170.3 714 158.8 C731.6 147.3 730.2 148.8 751.5 135 C772.8 121.2 824.6 87.3 842 76 C859.4 64.7 850.3 70.8 855.8 67.3 C861.3 63.8 871.8 57 875 55" stroke="#c818d0" stroke-width="0.95" fill="none" />
<path d="M535 321.3 C537.5 318.2 543.8 310.7 550 302.8 C556.2 294.9 566.7 281.1 572.5 274 C578.3 266.9 580.4 264.8 585 260 C589.6 255.2 594.5 250.2 600 245 C605.5 239.8 609.5 235.6 618 228.8 C626.5 222 635 215.1 651 204 C667 192.9 696.4 174 714 162.5 C731.6 151 735.2 148.8 756.5 135 C777.8 121.2 824.5 91.1 842 79.8 C859.5 68.5 855.1 71.4 861.4 67.3 C867.7 63.2 876.9 57 880 55" stroke="#d4d4d4" stroke-width="0.95" fill="none" />
<path d="M515.6 276.5 L525 299 L535 321.3" stroke="#d4d4d4" stroke-width="0.95" fill="none" />
<path d="M515.6 276.5 L521.3 273.5" stroke="#d4d4d4" stroke-width="0.95" fill="none" />
<path d="M521.7 277.8Q520.5 276.2 522.2 275.2L570.6 248.3Q571 248.1 571.4 248.4L582.1 258.5Q582.5 258.8 582.2 259.2L542.9 300Q540.5 302.5 538.4 299.7Z" stroke="#c468ec" stroke-width="1.9" fill="none" stroke-linejoin="round"/>
<path d="M543.8 341.5 C546.1 338.2 553.8 326.9 557.5 321.5 C561.2 316.1 561.7 314.7 566.3 309 C570.9 303.3 577.7 295.2 585 287.5 C592.3 279.8 601.9 270.4 610 262.5 C618.1 254.6 623.7 248.2 633.8 240 C643.9 231.8 662.4 219.2 670.5 213.1 C678.6 206.9 680.4 204.8 682.4 203.1" stroke="#d4d4d4" stroke-width="0.95" fill="none" />
<path d="M693.5 195.6 L716.5 180.4" stroke="#d4d4d4" stroke-width="0.95" fill="none" />
<path d="M739 165.6 L762 150" stroke="#d4d4d4" stroke-width="0.95" fill="none" />
<path d="M785 135 L807.8 119.8" stroke="#d4d4d4" stroke-width="0.95" fill="none" />
<path d="M830 105.4 L853.9 89.8" stroke="#d4d4d4" stroke-width="0.95" fill="none" />
<path d="M876.4 75.4 L888.9 67.3" stroke="#d4d4d4" stroke-width="0.95" fill="none" />
<path d="M500 513 C500.2 510.7 500.5 504.7 501.3 499.3 C502.1 493.9 503.6 486.8 505 480.5 C506.4 474.2 508.1 468.1 510 461.8 C511.9 455.6 514.1 448.7 516.3 443 C518.5 437.3 521 432.8 523.4 427.6 C525.8 422.4 528.2 417.1 530.6 412 C533 406.9 534.9 402.2 537.5 396.8 C540.1 391.4 543 385.4 546.3 379.3 C549.6 373.2 553.9 366.6 557.5 360.5 C561.1 354.4 563.9 349.5 568.1 343 C572.3 336.5 578.4 327.2 582.5 321.5 C586.6 315.8 587.9 314.2 592.5 309 C597.1 303.8 603.8 296.5 610 290 C616.2 283.5 623.8 276 630 270 C636.2 264 642.1 258.8 647.5 253.8 C652.9 248.8 651.4 249 662.5 240 C673.6 231 688.8 217.5 714 200 C739.2 182.5 792.7 148.9 814 135 C835.3 121.1 824.4 127.9 842 116.6 C859.6 105.3 903.5 77.6 919.5 67.3 C935.5 57 934.9 57 938 55" stroke="#d4d4d4" stroke-width="0.95" fill="none" />
<path d="M502.5 513 C502.7 510.7 503 504.7 503.8 499.3 C504.6 493.9 505.9 486.8 507.5 480.5 C509.1 474.2 511 468.1 513.1 461.8 C515.2 455.6 517.8 448.7 520 443 C522.2 437.3 524.2 432.8 526.4 427.6 C528.6 422.4 530.8 416.9 533.1 412 C535.4 407.1 537.4 403.2 540 398 C542.6 392.8 545.5 386.5 548.8 380.5 C552.1 374.5 556.2 368.1 560 361.8 C563.8 355.6 567.1 349.5 571.3 343 C575.5 336.5 580.8 328.5 585 322.8 C589.2 317.1 591.5 314.5 596.3 309 C601.1 303.5 607.5 296.5 613.8 290 C620 283.5 627.5 276 633.8 270 C640 264 645.8 258.8 651.3 253.8 C656.8 248.8 656.4 248.3 666.9 240 C677.4 231.7 688.8 221.5 714 204 C739.2 186.5 797.1 149 818.4 135 C839.7 121 824.4 131.1 842 119.8 C859.6 108.5 907.2 78.1 923.9 67.3 C940.6 56.5 939 57 942 55" stroke="#c818d0" stroke-width="0.95" fill="none" />
<path d="M515 513 C515.3 510.7 515.9 504.7 516.9 499.3 C517.9 493.9 519.7 486.8 521.3 480.5 C522.9 474.2 524.4 468.1 526.3 461.8 C528.2 455.6 530.1 449.5 532.5 443 C534.9 436.5 538.2 427.8 540.5 422.6 C542.8 417.4 544.1 416.1 546.3 412 C548.5 407.9 550.9 403.4 553.8 398 C556.7 392.6 560.3 385.6 563.8 379.3 C567.3 373.1 571.5 366.6 575 360.5 C578.5 354.4 581.2 348.7 585 343 C588.8 337.3 593.1 332.2 597.5 326.5 C601.9 320.8 606.7 314.8 611.3 309 C615.9 303.2 619.6 298 625 291.5 C630.4 285 637.3 276.3 643.8 270 C650.3 263.7 656.9 258.7 663.8 253.5 C670.7 248.3 673.1 247.2 685 239 C696.9 230.8 709.4 221.3 735.3 204 C761.2 186.7 813.8 152.5 840.3 135 C866.8 117.5 885.5 105.1 894.5 99.1" stroke="#c818d0" stroke-width="0.95" fill="none" />
<path d="M894.5 99.1 L945.8 67.3 L965 55" stroke="#e02060" stroke-width="0.95" fill="none" />
<path d="M501.9 247.5 L515 274" stroke="#d4d4d4" stroke-width="0.95" fill="none" stroke-dasharray="3.5 1.5"/>
<path d="M662 139 L685 122.4" stroke="#d4d4d4" stroke-width="0.95" fill="none" />
<path d="M706 106 L728.8 91" stroke="#d4d4d4" stroke-width="0.95" fill="none" />
<path d="M643.6 133.6 L648.6 130.6" stroke="#d4d4d4" stroke-width="0.95" fill="none" />
<path d="M670 113.6 L688.7 101" stroke="#d4d4d4" stroke-width="0.95" fill="none" />
<path d="M668.5 135 L684.8 122.3" stroke="#d4d4d4" stroke-width="0.95" fill="none" />
<path d="M702.3 128.9L674.2 90.4M712.7 122.1L684.4 83.2M723.1 115.3L694.5 76M733.5 108.5L704.6 68.8M743.9 101.7L714.7 61.6M754.3 94.8L724.8 54.4M764.7 88L735 47.2M775.1 81.2L745.1 40M785.5 74.4L755.2 32.8" stroke="#b4b4b4" stroke-width="3.6" fill="none" stroke-dasharray="0.7 0.45"/>
<path d="M656.2 112.4L666.6 107.2L664.8 104.4Z" stroke="#d4d4d4" stroke-width="0.7" fill="#555"/>
<path d="M665.7 105.8 L676.4 99.1" stroke="#c8c8c8" stroke-width="1.9" fill="none" />
<path d="M602 152L612.3 147.5L610.5 144.7Z" stroke="#d4d4d4" stroke-width="0.7" fill="#555"/>
<path d="M611.4 146.1 L621.5 138.9" stroke="#c8c8c8" stroke-width="1.9" fill="none" />
<path d="M451.3 117.3 L456.9 161.9 L468.8 160 L463.1 116Z" stroke="#d4d4d4" stroke-width="0.9" fill="none" />
<path d="M-2.2 -1.9h4.4v1.4h-4.4zM-2.2 0.5h4.4v1.4h-4.4z" fill="#f0e848" stroke="none" transform="translate(456.7 144.9) rotate(82.8)"/>
<path d="M-2.2 -1.9h4.4v1.4h-4.4zM-2.2 0.5h4.4v1.4h-4.4z" fill="#f0e848" stroke="none" transform="translate(457.4 150.1) rotate(82.8)"/>
<path d="M-2.2 -1.9h4.4v1.4h-4.4zM-2.2 0.5h4.4v1.4h-4.4z" fill="#f0e848" stroke="none" transform="translate(464.4 143.9) rotate(82.8)"/>
<path d="M-2.2 -1.9h4.4v1.4h-4.4zM-2.2 0.5h4.4v1.4h-4.4z" fill="#f0e848" stroke="none" transform="translate(465.1 149.1) rotate(82.8)"/>
<rect x="-2.2" y="-0.8" width="4.4" height="1.6" fill="#f0e848" stroke="none" transform="translate(453.5 122.9) rotate(82.8)"/>
<rect x="-2.2" y="-0.8" width="4.4" height="1.6" fill="#f0e848" stroke="none" transform="translate(463.3 122.3) rotate(82.8)"/>
<path d="M459 168.7 L466.5 201.3 L477.8 197.5 L469 166.2Z" stroke="#d4d4d4" stroke-width="0.9" fill="none" />
<path d="M-2.2 -1.9h4.4v1.4h-4.4zM-2.2 0.5h4.4v1.4h-4.4z" fill="#f0e848" stroke="none" transform="translate(461.9 174.4) rotate(77)"/>
<path d="M-2.2 -1.9h4.4v1.4h-4.4zM-2.2 0.5h4.4v1.4h-4.4z" fill="#f0e848" stroke="none" transform="translate(469.4 173.1) rotate(77)"/>
<path d="M-2.2 -1.9h4.4v1.4h-4.4zM-2.2 0.5h4.4v1.4h-4.4z" fill="#f0e848" stroke="none" transform="translate(467.5 195) rotate(77)"/>
<path d="M-2.2 -1.9h4.4v1.4h-4.4zM-2.2 0.5h4.4v1.4h-4.4z" fill="#f0e848" stroke="none" transform="translate(475 193.8) rotate(77)"/>
<path d="M462.9 160.9 L464.6 167.4" stroke="#d4d4d4" stroke-width="0.95" fill="none" />
<path d="M345 254 L378.1 224.6 L385.6 233.4 L353.1 262.8Z" stroke="#d4d4d4" stroke-width="0.9" fill="none" />
<path d="M-2.2 -1.9h4.4v1.4h-4.4zM-2.2 0.5h4.4v1.4h-4.4z" fill="#f0e848" stroke="none" transform="translate(368.2 236.2) rotate(-41.6)"/>
<path d="M-2.2 -1.9h4.4v1.4h-4.4zM-2.2 0.5h4.4v1.4h-4.4z" fill="#f0e848" stroke="none" transform="translate(372.1 232.6) rotate(-41.6)"/>
<path d="M-2.2 -1.9h4.4v1.4h-4.4zM-2.2 0.5h4.4v1.4h-4.4z" fill="#f0e848" stroke="none" transform="translate(373.7 242.4) rotate(-41.6)"/>
<path d="M-2.2 -1.9h4.4v1.4h-4.4zM-2.2 0.5h4.4v1.4h-4.4z" fill="#f0e848" stroke="none" transform="translate(377.6 238.8) rotate(-41.6)"/>
<rect x="-2.2" y="-0.8" width="4.4" height="1.6" fill="#f0e848" stroke="none" transform="translate(350.6 249.6) rotate(-41.6)"/>
<rect x="-2.2" y="-0.8" width="4.4" height="1.6" fill="#f0e848" stroke="none" transform="translate(357.5 257.8) rotate(-41.6)"/>
<path d="M382.5 220.9 L400 191.9 L410 197.5 L392.5 227.1Z" stroke="#d4d4d4" stroke-width="0.9" fill="none" />
<path d="M-2.2 -1.9h4.4v1.4h-4.4zM-2.2 0.5h4.4v1.4h-4.4z" fill="#f0e848" stroke="none" transform="translate(387.5 216.5) rotate(-58.9)"/>
<path d="M-2.2 -1.9h4.4v1.4h-4.4zM-2.2 0.5h4.4v1.4h-4.4z" fill="#f0e848" stroke="none" transform="translate(393.8 221.5) rotate(-58.9)"/>
<path d="M-2.2 -1.9h4.4v1.4h-4.4zM-2.2 0.5h4.4v1.4h-4.4z" fill="#f0e848" stroke="none" transform="translate(397.6 198.6) rotate(-58.9)"/>
<path d="M-2.2 -1.9h4.4v1.4h-4.4zM-2.2 0.5h4.4v1.4h-4.4z" fill="#f0e848" stroke="none" transform="translate(405.6 201.8) rotate(-58.9)"/>
<path d="M382 229 L387.5 224" stroke="#d4d4d4" stroke-width="0.95" fill="none" />
<path d="M440.3 237.1 L484.4 237.8 L484.4 250.3 L440.3 249.6Z" stroke="#d4d4d4" stroke-width="0.9" fill="none" />
<path d="M-2.2 -1.9h4.4v1.4h-4.4zM-2.2 0.5h4.4v1.4h-4.4z" fill="#f0e848" stroke="none" transform="translate(468.6 239.9) rotate(0.9)"/>
<path d="M-2.2 -1.9h4.4v1.4h-4.4zM-2.2 0.5h4.4v1.4h-4.4z" fill="#f0e848" stroke="none" transform="translate(473.9 240) rotate(0.9)"/>
<path d="M-2.2 -1.9h4.4v1.4h-4.4zM-2.2 0.5h4.4v1.4h-4.4z" fill="#f0e848" stroke="none" transform="translate(468.6 247.6) rotate(0.9)"/>
<path d="M-2.2 -1.9h4.4v1.4h-4.4zM-2.2 0.5h4.4v1.4h-4.4z" fill="#f0e848" stroke="none" transform="translate(473.9 247.7) rotate(0.9)"/>
<rect x="-2.2" y="-0.8" width="4.4" height="1.6" fill="#f0e848" stroke="none" transform="translate(446.9 238.9) rotate(0.9)"/>
<rect x="-2.2" y="-0.8" width="4.4" height="1.6" fill="#f0e848" stroke="none" transform="translate(446.9 248.4) rotate(0.9)"/>
<path d="M490.4 239 L523.1 230.5 L526.5 241.5 L493.1 250.5Z" stroke="#d4d4d4" stroke-width="0.9" fill="none" />
<path d="M-2.2 -1.9h4.4v1.4h-4.4zM-2.2 0.5h4.4v1.4h-4.4z" fill="#f0e848" stroke="none" transform="translate(497.5 239.3) rotate(-14.6)"/>
<path d="M-2.2 -1.9h4.4v1.4h-4.4zM-2.2 0.5h4.4v1.4h-4.4z" fill="#f0e848" stroke="none" transform="translate(498.6 247.1) rotate(-14.6)"/>
<path d="M-2.2 -1.9h4.4v1.4h-4.4zM-2.2 0.5h4.4v1.4h-4.4z" fill="#f0e848" stroke="none" transform="translate(518.1 233.8) rotate(-14.6)"/>
<path d="M-2.2 -1.9h4.4v1.4h-4.4zM-2.2 0.5h4.4v1.4h-4.4z" fill="#f0e848" stroke="none" transform="translate(520.3 241.5) rotate(-14.6)"/>
<path d="M484.4 244 L491.8 244" stroke="#d4d4d4" stroke-width="0.95" fill="none" />
<path d="M607.2 268.9 L631.5 246.3 L638.3 255.1 L614.5 277.6Z" stroke="#d4d4d4" stroke-width="0.9" fill="none" />
<path d="M-2.2 -1.9h4.4v1.4h-4.4zM-2.2 0.5h4.4v1.4h-4.4z" fill="#f0e848" stroke="none" transform="translate(611.5 266.4) rotate(-42.9)"/>
<path d="M-2.2 -1.9h4.4v1.4h-4.4zM-2.2 0.5h4.4v1.4h-4.4z" fill="#f0e848" stroke="none" transform="translate(617.3 272.6) rotate(-42.9)"/>
<path d="M-2.2 -1.9h4.4v1.4h-4.4zM-2.2 0.5h4.4v1.4h-4.4z" fill="#f0e848" stroke="none" transform="translate(627.3 251.3) rotate(-42.9)"/>
<path d="M-2.2 -1.9h4.4v1.4h-4.4zM-2.2 0.5h4.4v1.4h-4.4z" fill="#f0e848" stroke="none" transform="translate(633.3 257.6) rotate(-42.9)"/>
<path d="M637.8 243.8 L670.9 213.8 L678.4 223 L644.1 250.1Z" stroke="#d4d4d4" stroke-width="0.9" fill="none" />
<path d="M-2.2 -1.9h4.4v1.4h-4.4zM-2.2 0.5h4.4v1.4h-4.4z" fill="#f0e848" stroke="none" transform="translate(646.4 235) rotate(-42.2)"/>
<path d="M-2.2 -1.9h4.4v1.4h-4.4zM-2.2 0.5h4.4v1.4h-4.4z" fill="#f0e848" stroke="none" transform="translate(650.4 231.4) rotate(-42.2)"/>
<path d="M-2.2 -1.9h4.4v1.4h-4.4zM-2.2 0.5h4.4v1.4h-4.4z" fill="#f0e848" stroke="none" transform="translate(651.4 241.9) rotate(-42.2)"/>
<path d="M-2.2 -1.9h4.4v1.4h-4.4zM-2.2 0.5h4.4v1.4h-4.4z" fill="#f0e848" stroke="none" transform="translate(655.4 238.3) rotate(-42.2)"/>
<rect x="-2.2" y="-0.8" width="4.4" height="1.6" fill="#f0e848" stroke="none" transform="translate(666.1 218.6) rotate(-42.2)"/>
<rect x="-2.2" y="-0.8" width="4.4" height="1.6" fill="#f0e848" stroke="none" transform="translate(672.5 226) rotate(-42.2)"/>
<path d="M635 250.6 L640.8 246.8" stroke="#d4d4d4" stroke-width="0.95" fill="none" />
<path d="M279.1 356 L264.1 384.1 L275.4 390.3 L289.9 361.5Z" stroke="#d4d4d4" stroke-width="0.9" fill="none" />
<path d="M-2.2 -1.9h4.4v1.4h-4.4zM-2.2 0.5h4.4v1.4h-4.4z" fill="#f0e848" stroke="none" transform="translate(278.4 361.5) rotate(118.1)"/>
<path d="M-2.2 -1.9h4.4v1.4h-4.4zM-2.2 0.5h4.4v1.4h-4.4z" fill="#f0e848" stroke="none" transform="translate(285.9 365.3) rotate(118.1)"/>
<path d="M-2.2 -1.9h4.4v1.4h-4.4zM-2.2 0.5h4.4v1.4h-4.4z" fill="#f0e848" stroke="none" transform="translate(268.3 381.1) rotate(118.1)"/>
<path d="M-2.2 -1.9h4.4v1.4h-4.4zM-2.2 0.5h4.4v1.4h-4.4z" fill="#f0e848" stroke="none" transform="translate(275.4 384.6) rotate(118.1)"/>
<path d="M260.3 390.3 L232.3 423.7 L240.8 431.7 L269.1 397.1Z" stroke="#d4d4d4" stroke-width="0.9" fill="none" />
<path d="M-2.2 -1.9h4.4v1.4h-4.4zM-2.2 0.5h4.4v1.4h-4.4z" fill="#f0e848" stroke="none" transform="translate(254.2 400.2) rotate(130)"/>
<path d="M-2.2 -1.9h4.4v1.4h-4.4zM-2.2 0.5h4.4v1.4h-4.4z" fill="#f0e848" stroke="none" transform="translate(250.8 404.3) rotate(130)"/>
<path d="M-2.2 -1.9h4.4v1.4h-4.4zM-2.2 0.5h4.4v1.4h-4.4z" fill="#f0e848" stroke="none" transform="translate(261.4 405.3) rotate(130)"/>
<path d="M-2.2 -1.9h4.4v1.4h-4.4zM-2.2 0.5h4.4v1.4h-4.4z" fill="#f0e848" stroke="none" transform="translate(258 409.3) rotate(130)"/>
<rect x="-2.2" y="-0.8" width="4.4" height="1.6" fill="#f0e848" stroke="none" transform="translate(236.5 419.2) rotate(130)"/>
<rect x="-2.2" y="-0.8" width="4.4" height="1.6" fill="#f0e848" stroke="none" transform="translate(244 426.2) rotate(130)"/>
<path d="M269.8 387.2 L264.8 393.8" stroke="#d4d4d4" stroke-width="0.95" fill="none" />
<path d="M275.8 465 L306.3 452 L310.5 461.3 L280 476.3Z" stroke="#d4d4d4" stroke-width="0.9" fill="none" />
<path d="M-2.2 -1.9h4.4v1.4h-4.4zM-2.2 0.5h4.4v1.4h-4.4z" fill="#f0e848" stroke="none" transform="translate(280.8 465.8) rotate(-23.1)"/>
<path d="M-2.2 -1.9h4.4v1.4h-4.4zM-2.2 0.5h4.4v1.4h-4.4z" fill="#f0e848" stroke="none" transform="translate(285 473) rotate(-23.1)"/>
<path d="M-2.2 -1.9h4.4v1.4h-4.4zM-2.2 0.5h4.4v1.4h-4.4z" fill="#f0e848" stroke="none" transform="translate(302 455.8) rotate(-23.1)"/>
<path d="M-2.2 -1.9h4.4v1.4h-4.4zM-2.2 0.5h4.4v1.4h-4.4z" fill="#f0e848" stroke="none" transform="translate(305 463.8) rotate(-23.1)"/>
<path d="M314.5 450 L358.8 443 L360 455 L316.3 461.3Z" stroke="#d4d4d4" stroke-width="0.9" fill="none" />
<path d="M-2.2 -1.9h4.4v1.4h-4.4zM-2.2 0.5h4.4v1.4h-4.4z" fill="#f0e848" stroke="none" transform="translate(325.6 450.3) rotate(-9)"/>
<path d="M-2.2 -1.9h4.4v1.4h-4.4zM-2.2 0.5h4.4v1.4h-4.4z" fill="#f0e848" stroke="none" transform="translate(330.9 449.5) rotate(-9)"/>
<path d="M-2.2 -1.9h4.4v1.4h-4.4zM-2.2 0.5h4.4v1.4h-4.4z" fill="#f0e848" stroke="none" transform="translate(326.9 457.9) rotate(-9)"/>
<path d="M-2.2 -1.9h4.4v1.4h-4.4zM-2.2 0.5h4.4v1.4h-4.4z" fill="#f0e848" stroke="none" transform="translate(332.1 457.1) rotate(-9)"/>
<rect x="-2.2" y="-0.8" width="4.4" height="1.6" fill="#f0e848" stroke="none" transform="translate(352 445.6) rotate(-9)"/>
<rect x="-2.2" y="-0.8" width="4.4" height="1.6" fill="#f0e848" stroke="none" transform="translate(353.3 454.4) rotate(-9)"/>
<path d="M308.4 456.6 L315.4 455.6" stroke="#d4d4d4" stroke-width="0.95" fill="none" />
<path d="M280 488.8 L311.3 475 L315 485 L285 498.8Z" stroke="#d4d4d4" stroke-width="0.9" fill="none" />
<path d="M-2.2 -1.9h4.4v1.4h-4.4zM-2.2 0.5h4.4v1.4h-4.4z" fill="#f0e848" stroke="none" transform="translate(285 487.5) rotate(-23.8)"/>
<path d="M-2.2 -1.9h4.4v1.4h-4.4zM-2.2 0.5h4.4v1.4h-4.4z" fill="#f0e848" stroke="none" transform="translate(288.8 495) rotate(-23.8)"/>
<path d="M-2.2 -1.9h4.4v1.4h-4.4zM-2.2 0.5h4.4v1.4h-4.4z" fill="#f0e848" stroke="none" transform="translate(306.3 478.3) rotate(-23.8)"/>
<path d="M-2.2 -1.9h4.4v1.4h-4.4zM-2.2 0.5h4.4v1.4h-4.4z" fill="#f0e848" stroke="none" transform="translate(308.8 486.3) rotate(-23.8)"/>
<path d="M318.8 472.5 L362.5 466.3 L365 477.5 L321.3 483.8Z" stroke="#d4d4d4" stroke-width="0.9" fill="none" />
<path d="M-2.2 -1.9h4.4v1.4h-4.4zM-2.2 0.5h4.4v1.4h-4.4z" fill="#f0e848" stroke="none" transform="translate(330.6 472.8) rotate(-8.1)"/>
<path d="M-2.2 -1.9h4.4v1.4h-4.4zM-2.2 0.5h4.4v1.4h-4.4z" fill="#f0e848" stroke="none" transform="translate(335.9 472) rotate(-8.1)"/>
<path d="M-2.2 -1.9h4.4v1.4h-4.4zM-2.2 0.5h4.4v1.4h-4.4z" fill="#f0e848" stroke="none" transform="translate(331.9 480.1) rotate(-8.1)"/>
<path d="M-2.2 -1.9h4.4v1.4h-4.4zM-2.2 0.5h4.4v1.4h-4.4z" fill="#f0e848" stroke="none" transform="translate(337.1 479.3) rotate(-8.1)"/>
<rect x="-2.2" y="-0.8" width="4.4" height="1.6" fill="#f0e848" stroke="none" transform="translate(356.3 468.4) rotate(-8.1)"/>
<rect x="-2.2" y="-0.8" width="4.4" height="1.6" fill="#f0e848" stroke="none" transform="translate(357.5 476.8) rotate(-8.1)"/>
<path d="M313.2 480 L320 478.2" stroke="#d4d4d4" stroke-width="0.95" fill="none" />
<path d="M442.3 440.1 L474.1 427.6 L477.9 437.6 L446.5 450.9Z" stroke="#d4d4d4" stroke-width="0.9" fill="none" />
<path d="M-2.2 -1.9h4.4v1.4h-4.4zM-2.2 0.5h4.4v1.4h-4.4z" fill="#f0e848" stroke="none" transform="translate(447.8 440.1) rotate(-21.5)"/>
<path d="M-2.2 -1.9h4.4v1.4h-4.4zM-2.2 0.5h4.4v1.4h-4.4z" fill="#f0e848" stroke="none" transform="translate(450.3 446.9) rotate(-21.5)"/>
<path d="M-2.2 -1.9h4.4v1.4h-4.4zM-2.2 0.5h4.4v1.4h-4.4z" fill="#f0e848" stroke="none" transform="translate(468.3 431.8) rotate(-21.5)"/>
<path d="M-2.2 -1.9h4.4v1.4h-4.4zM-2.2 0.5h4.4v1.4h-4.4z" fill="#f0e848" stroke="none" transform="translate(472 438.3) rotate(-21.5)"/>
<path d="M477.4 421.3 L505.4 390 L514.2 397 L485.4 431.4Z" stroke="#d4d4d4" stroke-width="0.9" fill="none" />
<path d="M-2.2 -1.9h4.4v1.4h-4.4zM-2.2 0.5h4.4v1.4h-4.4z" fill="#f0e848" stroke="none" transform="translate(485.3 416.1) rotate(-48.2)"/>
<path d="M-2.2 -1.9h4.4v1.4h-4.4zM-2.2 0.5h4.4v1.4h-4.4z" fill="#f0e848" stroke="none" transform="translate(488.9 412.1) rotate(-48.2)"/>
<path d="M-2.2 -1.9h4.4v1.4h-4.4zM-2.2 0.5h4.4v1.4h-4.4z" fill="#f0e848" stroke="none" transform="translate(490.5 421.3) rotate(-48.2)"/>
<path d="M-2.2 -1.9h4.4v1.4h-4.4zM-2.2 0.5h4.4v1.4h-4.4z" fill="#f0e848" stroke="none" transform="translate(494.1 417.3) rotate(-48.2)"/>
<rect x="-2.2" y="-0.8" width="4.4" height="1.6" fill="#f0e848" stroke="none" transform="translate(501.7 395.8) rotate(-48.2)"/>
<rect x="-2.2" y="-0.8" width="4.4" height="1.6" fill="#f0e848" stroke="none" transform="translate(508.6 402.2) rotate(-48.2)"/>
<path d="M476 432.6 L481.4 426.4" stroke="#d4d4d4" stroke-width="0.95" fill="none" />
</g>
<rect x="49" y="84.6" width="945.7" height="0.8" fill="#5a5a5a"/>
<rect x="48.4" y="85" width="0.8" height="426.7" fill="#5a5a5a"/>
<path d="M52.1 81.6V84.6M56.7 81.6V84.6M61.3 81.6V84.6M65.8 81.6V84.6M70.4 77.2V84.6M75 81.6V84.6M79.5 81.6V84.6M84.1 81.6V84.6M88.7 81.6V84.6M93.2 79.4V84.6M97.8 81.6V84.6M102.4 81.6V84.6M106.9 81.6V84.6M111.5 81.6V84.6M116 77.2V84.6M120.6 81.6V84.6M125.2 81.6V84.6M129.7 81.6V84.6M134.3 81.6V84.6M138.9 79.4V84.6M143.4 81.6V84.6M148 81.6V84.6M152.6 81.6V84.6M157.1 81.6V84.6M161.7 77.2V84.6M166.3 81.6V84.6M170.8 81.6V84.6M175.4 81.6V84.6M180 81.6V84.6M184.5 79.4V84.6M189.1 81.6V84.6M193.7 81.6V84.6M198.2 81.6V84.6M202.8 81.6V84.6M207.3 77.2V84.6M211.9 81.6V84.6M216.5 81.6V84.6M221 81.6V84.6M225.6 81.6V84.6M230.2 79.4V84.6M234.7 81.6V84.6M239.3 81.6V84.6M243.9 81.6V84.6M248.4 81.6V84.6M253 77.2V84.6M257.6 81.6V84.6M262.1 81.6V84.6M266.7 81.6V84.6M271.3 81.6V84.6M275.8 79.4V84.6M280.4 81.6V84.6M285 81.6V84.6M289.5 81.6V84.6M294.1 81.6V84.6M298.6 77.2V84.6M303.2 81.6V84.6M307.8 81.6V84.6M312.3 81.6V84.6M316.9 81.6V84.6M321.5 79.4V84.6M326 81.6V84.6M330.6 81.6V84.6M335.2 81.6V84.6M339.7 81.6V84.6M344.3 77.2V84.6M348.9 81.6V84.6M353.4 81.6V84.6M358 81.6V84.6M362.6 81.6V84.6M367.1 79.4V84.6M371.7 81.6V84.6M376.3 81.6V84.6M380.8 81.6V84.6M385.4 81.6V84.6M389.9 77.2V84.6M394.5 81.6V84.6M399.1 81.6V84.6M403.6 81.6V84.6M408.2 81.6V84.6M412.8 79.4V84.6M417.3 81.6V84.6M421.9 81.6V84.6M426.5 81.6V84.6M431 81.6V84.6M435.6 77.2V84.6M440.2 81.6V84.6M444.7 81.6V84.6M449.3 81.6V84.6M453.9 81.6V84.6M458.4 79.4V84.6M463 81.6V84.6M467.6 81.6V84.6M472.1 81.6V84.6M476.7 81.6V84.6M481.2 77.2V84.6M485.8 81.6V84.6M490.4 81.6V84.6M494.9 81.6V84.6M499.5 81.6V84.6M504.1 79.4V84.6M508.6 81.6V84.6M513.2 81.6V84.6M517.8 81.6V84.6M522.3 81.6V84.6M526.9 77.2V84.6M531.5 81.6V84.6M536 81.6V84.6M540.6 81.6V84.6M545.2 81.6V84.6M549.7 79.4V84.6M554.3 81.6V84.6M558.9 81.6V84.6M563.4 81.6V84.6M568 81.6V84.6M572.5 77.2V84.6M577.1 81.6V84.6M581.7 81.6V84.6M586.2 81.6V84.6M590.8 81.6V84.6M595.4 79.4V84.6M599.9 81.6V84.6M604.5 81.6V84.6M609.1 81.6V84.6M613.6 81.6V84.6M618.2 77.2V84.6M622.8 81.6V84.6M627.3 81.6V84.6M631.9 81.6V84.6M636.5 81.6V84.6M641 79.4V84.6M645.6 81.6V84.6M650.2 81.6V84.6M654.7 81.6V84.6M659.3 81.6V84.6M663.8 77.2V84.6M668.4 81.6V84.6M673 81.6V84.6M677.5 81.6V84.6M682.1 81.6V84.6M686.7 79.4V84.6M691.2 81.6V84.6M695.8 81.6V84.6M700.4 81.6V84.6M704.9 81.6V84.6M709.5 77.2V84.6M714.1 81.6V84.6M718.6 81.6V84.6M723.2 81.6V84.6M727.8 81.6V84.6M732.3 79.4V84.6M736.9 81.6V84.6M741.5 81.6V84.6M746 81.6V84.6M750.6 81.6V84.6M755.1 77.2V84.6M759.7 81.6V84.6M764.3 81.6V84.6M768.8 81.6V84.6M773.4 81.6V84.6M778 79.4V84.6M782.5 81.6V84.6M787.1 81.6V84.6M791.7 81.6V84.6M796.2 81.6V84.6M800.8 77.2V84.6M805.4 81.6V84.6M809.9 81.6V84.6M814.5 81.6V84.6M819.1 81.6V84.6M823.6 79.4V84.6M828.2 81.6V84.6M832.8 81.6V84.6M837.3 81.6V84.6M841.9 81.6V84.6M846.4 77.2V84.6M851 81.6V84.6M855.6 81.6V84.6M860.1 81.6V84.6M864.7 81.6V84.6M869.3 79.4V84.6M873.8 81.6V84.6M878.4 81.6V84.6M883 81.6V84.6M887.5 81.6V84.6M892.1 77.2V84.6M896.7 81.6V84.6M901.2 81.6V84.6M905.8 81.6V84.6M910.4 81.6V84.6M914.9 79.4V84.6M919.5 81.6V84.6M924.1 81.6V84.6M928.6 81.6V84.6M933.2 81.6V84.6M937.7 77.2V84.6M942.3 81.6V84.6M946.9 81.6V84.6M951.4 81.6V84.6M956 81.6V84.6M960.6 79.4V84.6M965.1 81.6V84.6M969.7 81.6V84.6M974.3 81.6V84.6M978.8 81.6V84.6M983.4 77.2V84.6M988 81.6V84.6M992.5 81.6V84.6M46.2 86H48.6M46.2 90.5H48.6M41.3 95.1H48.6M46.2 99.6H48.6M46.2 104.2H48.6M46.2 108.8H48.6M46.2 113.3H48.6M44.6 117.8H48.6M46.2 122.4H48.6M46.2 126.9H48.6M46.2 131.5H48.6M46.2 136H48.6M41.3 140.6H48.6M46.2 145.1H48.6M46.2 149.7H48.6M46.2 154.2H48.6M46.2 158.8H48.6M44.6 163.3H48.6M46.2 167.9H48.6M46.2 172.4H48.6M46.2 177H48.6M46.2 181.6H48.6M41.3 186.1H48.6M46.2 190.6H48.6M46.2 195.2H48.6M46.2 199.8H48.6M46.2 204.3H48.6M44.6 208.8H48.6M46.2 213.4H48.6M46.2 217.9H48.6M46.2 222.5H48.6M46.2 227H48.6M41.3 231.6H48.6M46.2 236.1H48.6M46.2 240.7H48.6M46.2 245.2H48.6M46.2 249.8H48.6M44.6 254.3H48.6M46.2 258.9H48.6M46.2 263.4H48.6M46.2 268H48.6M46.2 272.5H48.6M41.3 277.1H48.6M46.2 281.6H48.6M46.2 286.2H48.6M46.2 290.8H48.6M46.2 295.3H48.6M44.6 299.9H48.6M46.2 304.4H48.6M46.2 308.9H48.6M46.2 313.5H48.6M46.2 318H48.6M41.3 322.6H48.6M46.2 327.1H48.6M46.2 331.7H48.6M46.2 336.2H48.6M46.2 340.8H48.6M44.6 345.4H48.6M46.2 349.9H48.6M46.2 354.4H48.6M46.2 359H48.6M46.2 363.5H48.6M41.3 368.1H48.6M46.2 372.6H48.6M46.2 377.2H48.6M46.2 381.8H48.6M46.2 386.3H48.6M44.6 390.9H48.6M46.2 395.4H48.6M46.2 399.9H48.6M46.2 404.5H48.6M46.2 409H48.6M41.3 413.6H48.6M46.2 418.1H48.6M46.2 422.7H48.6M46.2 427.2H48.6M46.2 431.8H48.6M44.6 436.4H48.6M46.2 440.9H48.6M46.2 445.4H48.6M46.2 450H48.6M46.2 454.5H48.6M41.3 459.1H48.6M46.2 463.6H48.6M46.2 468.2H48.6M46.2 472.8H48.6M46.2 477.3H48.6M44.6 481.9H48.6M46.2 486.4H48.6M46.2 490.9H48.6M46.2 495.5H48.6M46.2 500H48.6M41.3 504.6H48.6M46.2 509.1H48.6" stroke="#e8e8e8" stroke-width="0.7" fill="none"/>
<text x="70.4" y="75.5" text-anchor="middle" font-size="8.9" font-weight="bold" fill="#ffb400">327.05km</text>
<text x="116.1" y="74.6" text-anchor="middle" font-size="5.7" fill="#f8f8f8" stroke="#f8f8f8" stroke-width="0.12">327.06km</text>
<text x="161.7" y="74.6" text-anchor="middle" font-size="5.7" fill="#f8f8f8" stroke="#f8f8f8" stroke-width="0.12">327.07km</text>
<text x="207.3" y="74.6" text-anchor="middle" font-size="5.7" fill="#f8f8f8" stroke="#f8f8f8" stroke-width="0.12">327.08km</text>
<text x="253" y="74.6" text-anchor="middle" font-size="5.7" fill="#f8f8f8" stroke="#f8f8f8" stroke-width="0.12">327.09km</text>
<text x="298.6" y="75.5" text-anchor="middle" font-size="8.9" font-weight="bold" fill="#ffb400">327.1km</text>
<text x="344.3" y="74.6" text-anchor="middle" font-size="5.7" fill="#f8f8f8" stroke="#f8f8f8" stroke-width="0.12">327.11km</text>
<text x="390" y="74.6" text-anchor="middle" font-size="5.7" fill="#f8f8f8" stroke="#f8f8f8" stroke-width="0.12">327.12km</text>
<text x="435.6" y="74.6" text-anchor="middle" font-size="5.7" fill="#f8f8f8" stroke="#f8f8f8" stroke-width="0.12">327.13km</text>
<text x="481.2" y="74.6" text-anchor="middle" font-size="5.7" fill="#f8f8f8" stroke="#f8f8f8" stroke-width="0.12">327.14km</text>
<text x="526.9" y="75.5" text-anchor="middle" font-size="8.9" font-weight="bold" fill="#ffb400">327.15km</text>
<text x="572.5" y="74.6" text-anchor="middle" font-size="5.7" fill="#f8f8f8" stroke="#f8f8f8" stroke-width="0.12">327.16km</text>
<text x="618.2" y="74.6" text-anchor="middle" font-size="5.7" fill="#f8f8f8" stroke="#f8f8f8" stroke-width="0.12">327.17km</text>
<text x="663.8" y="74.6" text-anchor="middle" font-size="5.7" fill="#f8f8f8" stroke="#f8f8f8" stroke-width="0.12">327.18km</text>
<text x="709.5" y="74.6" text-anchor="middle" font-size="5.7" fill="#f8f8f8" stroke="#f8f8f8" stroke-width="0.12">327.19km</text>
<text x="755.1" y="75.5" text-anchor="middle" font-size="8.9" font-weight="bold" fill="#ffb400">327.2km</text>
<text x="800.8" y="74.6" text-anchor="middle" font-size="5.7" fill="#f8f8f8" stroke="#f8f8f8" stroke-width="0.12">327.21km</text>
<text x="846.4" y="74.6" text-anchor="middle" font-size="5.7" fill="#f8f8f8" stroke="#f8f8f8" stroke-width="0.12">327.22km</text>
<text x="892.1" y="74.6" text-anchor="middle" font-size="5.7" fill="#f8f8f8" stroke="#f8f8f8" stroke-width="0.12">327.23km</text>
<text x="937.8" y="74.6" text-anchor="middle" font-size="5.7" fill="#f8f8f8" stroke="#f8f8f8" stroke-width="0.12">327.24km</text>
<text x="983.4" y="75.5" text-anchor="middle" font-size="8.9" font-weight="bold" fill="#ffb400">327.25km</text>
<clipPath id="lr"><rect x="30.3" y="85.4" width="18.7" height="426.4"/></clipPath><g clip-path="url(#lr)">
<text transform="translate(39 95.1) rotate(-90)" text-anchor="middle" font-size="5.7" fill="#f8f8f8" stroke="#f8f8f8" stroke-width="0.12">4361.33km</text>
<text transform="translate(39 140.6) rotate(-90)" text-anchor="middle" font-size="5.7" fill="#f8f8f8" stroke="#f8f8f8" stroke-width="0.12">4361.32km</text>
<text transform="translate(39 186.1) rotate(-90)" text-anchor="middle" font-size="5.7" fill="#f8f8f8" stroke="#f8f8f8" stroke-width="0.12">4361.31km</text>
<text transform="translate(39.2 231.6) rotate(-90)" text-anchor="middle" font-size="8.6" font-weight="bold" fill="#ffb400">4361.3km</text>
<text transform="translate(39 277.1) rotate(-90)" text-anchor="middle" font-size="5.7" fill="#f8f8f8" stroke="#f8f8f8" stroke-width="0.12">4361.29km</text>
<text transform="translate(39 322.6) rotate(-90)" text-anchor="middle" font-size="5.7" fill="#f8f8f8" stroke="#f8f8f8" stroke-width="0.12">4361.28km</text>
<text transform="translate(39 368.1) rotate(-90)" text-anchor="middle" font-size="5.7" fill="#f8f8f8" stroke="#f8f8f8" stroke-width="0.12">4361.27km</text>
<text transform="translate(39 413.6) rotate(-90)" text-anchor="middle" font-size="5.7" fill="#f8f8f8" stroke="#f8f8f8" stroke-width="0.12">4361.26km</text>
<text transform="translate(39.2 459.1) rotate(-90)" text-anchor="middle" font-size="8.6" font-weight="bold" fill="#ffb400">4361.25km</text>
<text transform="translate(39 504.6) rotate(-90)" text-anchor="middle" font-size="5.7" fill="#f8f8f8" stroke="#f8f8f8" stroke-width="0.12">4361.24km</text>
</g>
<defs><linearGradient id="vtr" x1="0" x2="1" y1="0" y2="0"><stop offset="0" stop-color="#5c5c5c"/><stop offset="0.5" stop-color="#8c8c8c"/><stop offset="1" stop-color="#a0a0a0"/></linearGradient><linearGradient id="htr" x1="0" x2="0" y1="0" y2="1"><stop offset="0" stop-color="#a8a8a8"/><stop offset="0.25" stop-color="#8e8e8e"/><stop offset="1" stop-color="#606060"/></linearGradient><linearGradient id="hth" x1="0" x2="0" y1="0" y2="1"><stop offset="0" stop-color="#d0d0d0"/><stop offset="0.3" stop-color="#b4b4b4"/><stop offset="1" stop-color="#8a8a8a"/></linearGradient><linearGradient id="vth" x1="0" x2="1" y1="0" y2="0"><stop offset="0" stop-color="#909090"/><stop offset="0.5" stop-color="#c8c8c8"/><stop offset="1" stop-color="#d8d8d8"/></linearGradient></defs>
<rect x="994.7" y="66" width="8.3" height="446" fill="url(#vtr)"/>
<rect x="994.9" y="66.3" width="8" height="8" fill="#ffb900"/>
<path d="M996.7 71.6L998.9 69.2L1001.1 71.6" stroke="#000" stroke-width="1.3" fill="none"/>
<rect x="994.9" y="503.2" width="8" height="8" fill="#ffb900"/>
<path d="M996.7 506L998.9 508.4L1001.1 506" stroke="#000" stroke-width="1.3" fill="none"/>
<rect x="995.2" y="426" width="7.6" height="18.5" fill="url(#vth)" stroke="#dcdcdc" stroke-width="0.4"/>
<path d="M997.5 434.3h3M997.5 436.3h3" stroke="#8c8c8c" stroke-width="0.5"/>
<rect x="30.3" y="511.8" width="964.4" height="8.2" fill="url(#htr)"/>
<rect x="30.3" y="512" width="7.8" height="7.8" fill="#ffb900"/>
<path d="M35.2 513.8L33 515.9L35.2 518" stroke="#000" stroke-width="1.3" fill="none"/>
<rect x="986" y="512" width="8" height="7.8" fill="#ffb900"/>
<path d="M989 513.8L991.2 515.9L989 518" stroke="#000" stroke-width="1.3" fill="none"/>
<rect x="994.7" y="511.8" width="8.3" height="8.2" fill="#151515"/>
<rect x="54.5" y="512.2" width="30.5" height="7.6" fill="url(#hth)" stroke="#d8d8d8" stroke-width="0.4"/>
<path d="M68.8 514.5v3M70.8 514.5v3" stroke="#7c7c7c" stroke-width="0.5"/>
</svg>
<svg class="abs" style="left:0;top:0" width="1024" height="555" viewBox="0 0 1024 555" font-family="Liberation Sans, sans-serif">
<path d="M959.5 6.3h5" stroke="#222" stroke-width="0.7"/>
<rect x="982.3" y="4.3" width="3.8" height="3.8" fill="none" stroke="#222" stroke-width="0.6"/><path d="M983.5 4.3V3.2h3.8v3.8h-1.2" fill="none" stroke="#222" stroke-width="0.6"/>
<path d="M1008 3.6l5 5M1013 3.6l-5 5" stroke="#222" stroke-width="0.7"/>
<path d="M1.1 3Q5.4 0.2 9.8 2.1L5.1 10.1Z" fill="#f8a94f"/><path d="M2.6 4.4Q5.4 2.6 8.2 4M3.6 6.4Q5.2 5.4 7 6.2M4.4 8.2Q5.2 7.8 6 8.2" fill="none" stroke="#fbd0a0" stroke-width="0.6"/><circle cx="5.2" cy="4.7" r="0.9" fill="#fff"/>
<path d="M3.8 25.2h5l2.6 2.6v7.6h-7.6z" fill="#fff" stroke="#c4a484" stroke-width="0.8"/><path d="M8.8 25.2v2.6h2.6" fill="none" stroke="#c4a484" stroke-width="0.7"/>
<path d="M18.2 26.6h4l1 1.4h4.6v7h-9.6z" fill="#f4b474"/><path d="M19.6 29.4h9.6l-1.6 5.6h-9.4z" fill="#f0a45c"/><path d="M23 34.8c0.2-2.4 0.8-3.6 2.4-4.4l-0.6-1 3 0.6-1 2.8-0.6-1c-1 0.6-1.4 1.6-1.4 3z" fill="#4c9a54"/>
<path d="M32.9 29.5h3.4l-1.7 2z" fill="#222"/>
<path d="M41.6 25.2h8.4l1.6 1.6v8.6h-10z" fill="#f4b474"/><rect x="43.6" y="25.8" width="5.6" height="3.2" fill="#fdf4ea"/><rect x="46.8" y="26.2" width="1.4" height="2.4" fill="#f4b474"/><rect x="43.2" y="31" width="6.8" height="3.8" fill="#fdf4ea"/><path d="M46.6 31v3.8" stroke="#f4b474" stroke-width="0.8"/>
<rect x="57.2" y="26" width="9.6" height="9" fill="#fff" stroke="#c4a484" stroke-width="1"/><path d="M57.2 27.6h9.6" stroke="#c4a484" stroke-width="1.2"/><path d="M58.8 30h6.2M58.8 31.8h6.2M58.8 33.4h4" stroke="#9cc49c" stroke-width="0.7"/>
<path d="M71.5 24.5V36.5" stroke="#9c9c9c" stroke-width="0.8"/>
<path d="M76.4 31.8l3.6-4 0.4 2.2c3.6-1.6 6.8-0.2 7.8 3.8-1.6-2.2-4.2-2.6-6.6-1.4l1 2z" fill="#b48c68"/>
<path d="M91.5 29.5h3.4l-1.7 2z" fill="#222"/>
<path d="M112 31.8l-3.6-4-0.4 2.2c-3.6-1.6-6.8-0.2-7.8 3.8 1.6-2.2 4.2-2.6 6.6-1.4l-1 2z" fill="#a4a4a4"/>
<path d="M115.5 29.5h3.4l-1.7 2z" fill="#8c8c8c"/>
<path d="M122.4 24.5V36.5" stroke="#9c9c9c" stroke-width="0.8"/>
<g stroke="#a4a4a4" fill="none"><path d="M128.6 25.4l6.6 7.4M136.6 25.4l-6.6 7.4" stroke-width="1.1"/><circle cx="129.4" cy="34" r="1.7" stroke-width="1"/><circle cx="135.8" cy="34" r="1.7" stroke-width="1"/></g>
<path d="M143.4 25.4h4l2 2v5.4h-6z" fill="#fff" stroke="#a4a4a4" stroke-width="0.7"/><path d="M146.8 28.4h4l2 2v5.4h-6z" fill="#fff" stroke="#a4a4a4" stroke-width="0.7"/>
<rect x="158.6" y="26" width="7" height="8.6" rx="0.6" fill="#f4b474"/><rect x="160.4" y="25" width="3.4" height="1.8" fill="#d89858"/><path d="M162.2 28.8h4l2.2 2.2v4.6h-6.2z" fill="#fff" stroke="#c4a484" stroke-width="0.7"/>
<path d="M174.2 25.6l10 10M184.2 25.6l-10 10" stroke="#9c9c9c" stroke-width="1.5"/>
<path d="M188.6 24.5V36.5" stroke="#9c9c9c" stroke-width="0.8"/>
<circle cx="199" cy="30.4" r="5" fill="#b48c68"/><path d="M196.2 30.4l2.8-2.4v1.6h3v1.6h-3v1.6z" fill="#fff"/>
<circle cx="214.6" cy="30.4" r="5" fill="#b48c68"/><path d="M217.4 30.4l-2.8-2.4v1.6h-3v1.6h3v1.6z" fill="#fff"/>
<path d="M223.6 24.5V36.5" stroke="#9c9c9c" stroke-width="0.8"/>
<path d="M228.8 33.2l8.6-8.4 2.6 2.6-8.6 8.4z" fill="#f4b474"/><path d="M231.2 31.4l1 1M233.2 29.4l1 1M235.2 27.4l1 1" stroke="#d89050" stroke-width="0.5"/>
<path d="M249.8 31.4l-4.2 4" stroke="#c4a484" stroke-width="1.5" stroke-linecap="round"/><circle cx="252.2" cy="29" r="3.3" fill="#fff" stroke="#c4a484" stroke-width="1"/><circle cx="252.2" cy="29" r="1.9" fill="#f4b474"/>
<rect x="260" y="25" width="6.4" height="4.6" fill="#5f9a6a"/><path d="M264.4 31.6l-4 3.8" stroke="#c4a484" stroke-width="1.5" stroke-linecap="round"/><circle cx="266.8" cy="29.4" r="3.3" fill="#fff" stroke="#c4a484" stroke-width="1"/><circle cx="266.8" cy="29.4" r="1.9" fill="#f4b474"/>
<path d="M274.6 24.5V36.5" stroke="#9c9c9c" stroke-width="0.8"/>
<rect x="280.4" y="26.6" width="9.4" height="7.8" fill="#fff" stroke="#c4a484" stroke-width="0.9"/><path d="M285.1 26.6v7.8" stroke="#c4a484" stroke-width="0.8"/>
<path d="M294.90000000000003 29.5h3.4l-1.7 2z" fill="#222"/>
<path d="M302.6 24.5V36.5" stroke="#9c9c9c" stroke-width="0.8"/>
<rect x="307.8" y="26.6" width="9.4" height="7.8" fill="#fff" stroke="#c4a484" stroke-width="0.9"/><rect x="309" y="27.8" width="1.6" height="5.4" fill="#f4b474"/><rect x="310.8" y="27.8" width="5.2" height="5.4" fill="#8db894"/>
<rect x="323.4" y="26.6" width="9.4" height="7.8" fill="#fff" stroke="#c4a484" stroke-width="0.9"/><path d="M325 33l2.4-1 1.6-3.6 1.8 0.4-0.8 2.4 1.4 1.8z" fill="#5f9a6a"/>
<rect x="338.6" y="26.6" width="9.4" height="7.8" fill="#fff" stroke="#c4a484" stroke-width="0.9"/><path d="M340 31l2.4-1.6 2 1 2.6-2.4" fill="none" stroke="#8db894" stroke-width="0.7"/><path d="M340 29l2 1.4 2.4 2.2h2.4" fill="none" stroke="#f4b474" stroke-width="0.7"/>
<path d="M352.6 24.5V36.5" stroke="#9c9c9c" stroke-width="0.8"/>
<path d="M360.6 27.4l1.8-1.2 6 7.8-1.8 1.4z" fill="#b48c68"/><path d="M360.6 27.4l1.8-1.2 1.4 1.8-1.8 1.3z" fill="#d89050"/><path d="M359.4 25.2l0.8 0.6M362.6 24.6l0.2 0.8M364.6 26l0.8-0.4" stroke="#f4b474" stroke-width="0.5"/>
<circle cx="15.5" cy="44.4" r="3.5" fill="#f4b474" stroke="#eaa15e" stroke-width="0.5"/><circle cx="15.5" cy="44.2" r="1.2" fill="#fff"/>
<circle cx="1017.6" cy="44.4" r="3.5" fill="#f4b474" stroke="#eaa15e" stroke-width="0.5"/><path d="M1015.8 44.4h3.6" stroke="#fff" stroke-width="0.9"/>
<path d="M13.2 62c0.4-4.6 3.2-7.4 7.8-8v8z" fill="#f4b474"/><circle cx="13.2" cy="62" r="1.2" fill="#b48c68"/><circle cx="21" cy="54" r="1.2" fill="#b48c68"/>
<path d="M61 54.8l4.4 7h-8.8z" fill="#a9d3ab" stroke="#6fa877" stroke-width="0.9"/><circle cx="61" cy="54.6" r="1.2" fill="#6fa877"/><circle cx="56.6" cy="62" r="1.2" fill="#6fa877"/><circle cx="65.4" cy="62" r="1.2" fill="#6fa877"/>
<rect x="101.6" y="53.6" width="6.8" height="9.4" fill="#c2c2c2"/><path d="M105 53.6v9.4" stroke="#d8d8d8" stroke-width="0.6" stroke-dasharray="1.2 0.8"/>
<path d="M145.4 53.2h3.8l2.2 2.2v7.6h-6z" fill="#fff" stroke="#a4a4d4" stroke-width="0.7"/>
<path d="M185.6 52.5V64" stroke="#9c9c9c" stroke-width="0.8"/>
<rect x="190.4" y="54.4" width="7.4" height="5.4" fill="#fdf6ee" stroke="#f4b474" stroke-width="0.7"/><rect x="192" y="56" width="7.4" height="5.4" fill="#fdf6ee" stroke="#f4b474" stroke-width="0.7"/><rect x="193.8" y="57.6" width="7.8" height="5.6" fill="#fdf6ee" stroke="#f4b474" stroke-width="0.7"/><rect x="196.4" y="59.4" width="3.6" height="2.8" fill="#5468f0"/>
<path d="M205.6 52.5V64" stroke="#9c9c9c" stroke-width="0.8"/>
<path d="M260.90000000000003 58.2h3.4l-1.7 2z" fill="#222"/>
<path d="M267.4 52.5V64" stroke="#9c9c9c" stroke-width="0.8"/>
<rect x="272.4" y="54.4" width="6.4" height="4.8" fill="#fdf6ee" stroke="#f4b474" stroke-width="0.7"/><rect x="273.8" y="55.8" width="6.4" height="4.8" fill="#fdf6ee" stroke="#f4b474" stroke-width="0.7"/><rect x="275.6" y="57.4" width="8.2" height="5.8" rx="0.8" fill="#5fb83c"/>
<path d="M288.4 62.6l6-6.4 4.4 6.4z" fill="#57ad3a"/><path d="M293.4 57.4l3.8-3.4" stroke="#f4b474" stroke-width="0.9"/>
<path d="M303.4 62.6l5.2-5.6 5.2 5.6z" fill="#57ad3a"/>
<path d="M318.6 62.6l5.6-5.8 5.8 5.8z" fill="#57ad3a"/><path d="M319 63.2h11" stroke="#3f8f2c" stroke-width="0.5"/>
<path d="M334.2 62.6l6-6 5.2 6z" fill="#57ad3a"/><path d="M342 56h2.8" stroke="#e02020" stroke-width="0.9"/>
<path d="M351.4 57.6l3.8-3.8 3.8 3.8z" fill="#57ad3a"/><path d="M351.4 59l3.8 4 3.8-4z" fill="#fff" stroke="#f4b474" stroke-width="0.7"/>
<path d="M364.2 52.5V64" stroke="#9c9c9c" stroke-width="0.8"/>
<rect x="370.4" y="55.4" width="2.6" height="2.6" fill="#8db894"/>
<rect x="370.4" y="59.0" width="2.6" height="2.6" fill="#f4b474"/>
<rect x="373.79999999999995" y="55.4" width="2.6" height="2.6" fill="#f4b474"/>
<rect x="373.79999999999995" y="59.0" width="2.6" height="2.6" fill="#8db894"/>
<rect x="377.2" y="55.4" width="2.6" height="2.6" fill="#8db894"/>
<rect x="377.2" y="59.0" width="2.6" height="2.6" fill="#f4b474"/>
<path d="M386.6 60l1.2-5.2h1.8l0.6 2.4h1l0.6-2.4h1.8l1.2 5.2z" fill="#c4a484"/><circle cx="387.8" cy="60.6" r="2.2" fill="#c4a484"/><circle cx="393.6" cy="60.6" r="2.2" fill="#c4a484"/><circle cx="387.8" cy="60.8" r="1" fill="#f4e8dc"/><circle cx="393.6" cy="60.8" r="1" fill="#f4e8dc"/>
<path d="M12.6 83L25.4 70.2" stroke="#b48c68" stroke-width="0.8" stroke-dasharray="1 0.5"/><circle cx="12.6" cy="83" r="1.5" fill="#b48c68"/><circle cx="25.4" cy="70.4" r="1.5" fill="#b48c68"/>
<path d="M12.4 103.4c0.6-7.6 5.6-12.6 13.4-13.4v13.4z" fill="#f4b474"/><circle cx="12.4" cy="103.2" r="1.4" fill="#b48c68"/><circle cx="25.8" cy="90" r="1.4" fill="#b48c68"/>
<circle cx="19" cy="117.6" r="7.2" fill="#f4b474" stroke="#b48c68" stroke-width="0.6"/><circle cx="19" cy="117.6" r="1.3" fill="#b48c68"/>
<path d="M12.4 143.8c1.4-5.6 6.4-9.2 13.4-9.6v6.2q-7 0.6-13.4 3.4z" fill="#f4b474"/><circle cx="12.4" cy="143.8" r="1.4" fill="#b48c68"/><circle cx="25.8" cy="134.2" r="1.4" fill="#b48c68"/>
<ellipse cx="19" cy="157.4" rx="7.4" ry="5.4" fill="#f4b474" stroke="#b48c68" stroke-width="0.6"/><circle cx="19" cy="157.4" r="1.3" fill="#b48c68"/>
<text x="19.4" y="185.2" text-anchor="middle" font-size="19" font-weight="bold" fill="#f4b474" stroke="#b48c68" stroke-width="0.2">A</text>
<rect x="12.2" y="192.2" width="14.2" height="13.6" fill="#f4b474" stroke="#e0a060" stroke-width="0.5"/><path d="M12.2 196.8h3.6v-4.6M19.4 192.2v4.6h3.4v4.4h3.6M12.2 201.2h3.6v4.6M19.4 205.8v-4.6h-3.6" fill="none" stroke="#eaa868" stroke-width="0.5"/>
<circle cx="19" cy="218.6" r="1.1" fill="#6fa877"/>
<path d="M19 234l6.8 10.6H12.2z" fill="#a9d3ab" stroke="#6fa877" stroke-width="0.9"/><circle cx="19" cy="233.8" r="1.3" fill="#6fa877"/><circle cx="12.2" cy="244.6" r="1.3" fill="#6fa877"/><circle cx="25.8" cy="244.6" r="1.3" fill="#6fa877"/>
<path d="M12.6 265.4L25.6 252.4" stroke="#6fa877" stroke-width="0.9"/><circle cx="12.6" cy="265.4" r="1.3" fill="#6fa877"/><circle cx="25.6" cy="252.6" r="1.3" fill="#6fa877"/>
<path d="M19.0 272.8 L25.5 277.5 L23.0 285.1 L15.0 285.1 L12.5 277.5 Z" fill="#a9d3ab" stroke="#6fa877" stroke-width="0.9"/>
<circle cx="19.0" cy="272.8" r="1.3" fill="#6fa877"/>
<circle cx="25.5" cy="277.5" r="1.3" fill="#6fa877"/>
<circle cx="23.0" cy="285.1" r="1.3" fill="#6fa877"/>
<circle cx="15.0" cy="285.1" r="1.3" fill="#6fa877"/>
<circle cx="12.5" cy="277.5" r="1.3" fill="#6fa877"/>
<path d="M19.0 293.6 L25.5 298.3 L23.0 305.9 L15.0 305.9 L12.5 298.3 Z" fill="none" stroke="#6fa877" stroke-width="0.9"/>
<circle cx="19.0" cy="293.6" r="1.3" fill="#6fa877"/>
<circle cx="25.5" cy="298.3" r="1.3" fill="#6fa877"/>
<circle cx="23.0" cy="305.9" r="1.3" fill="#6fa877"/>
<circle cx="15.0" cy="305.9" r="1.3" fill="#6fa877"/>
<circle cx="12.5" cy="298.3" r="1.3" fill="#6fa877"/>
<path d="M13.8 313.4h7l3.6 3.6v10.4h-10.6z" fill="#fff" stroke="#b8b8b8" stroke-width="0.7"/><path d="M20.8 313.4v3.6h3.6" fill="none" stroke="#b8b8b8" stroke-width="0.6"/>
<path d="M13.8 334.4h7l3.6 3.6v10.4h-10.6z" fill="#fff" stroke="#b8b8b8" stroke-width="0.7"/><path d="M20.8 334.4v3.6h3.6" fill="none" stroke="#b8b8b8" stroke-width="0.6"/><path d="M16.4 338v9" stroke="#c8c8c8" stroke-width="0.5" stroke-dasharray="1 1"/>
<path d="M4 42v228M4 312v230" stroke="#c4c4c4" stroke-width="1.2" stroke-dasharray="0.8 1.8"/>
<rect x="1.6" y="274.6" width="4.8" height="32.8" rx="1.6" fill="#a6d4a6" stroke="#74b878" stroke-width="0.7"/><path d="M3.2 290.4l2 1.6-2 1.6z" fill="#fff"/>
<rect x="1009.2" y="67.4" width="8.6" height="13.8" fill="#c4c4c4"/><path d="M1013.5 67.4v13.8" stroke="#d6d6d6" stroke-width="0.6" stroke-dasharray="1.2 0.8"/>
<rect x="1009.2" y="89.6" width="8.6" height="13.8" fill="#c4c4c4"/><path d="M1013.5 89.6v13.8" stroke="#d6d6d6" stroke-width="0.6" stroke-dasharray="1.2 0.8"/>
<path d="M1006.6 96.6h13" stroke="#9484c4" stroke-width="1"/>
<rect x="1009.2" y="110.4" width="8.6" height="13.8" fill="#c4c4c4"/><path d="M1013.5 110.4v13.8" stroke="#d6d6d6" stroke-width="0.6" stroke-dasharray="1.2 0.8"/>
<path d="M1007 110.4h2.2v7.2z" fill="#9484c4"/>
<rect x="1009.8" y="131" width="7.4" height="14" fill="#c4c4c4"/><path d="M1013.5 131v14" stroke="#d6d6d6" stroke-width="0.6" stroke-dasharray="1.2 0.8"/>
<rect x="1006.8" y="134.6" width="13.4" height="6.8" fill="#c4c4c4"/><circle cx="1013.5" cy="138" r="2.8" fill="#9484c4"/>
<rect x="1011.6" y="151.4" width="7" height="13.8" fill="#c4c4c4"/><path d="M1015.1 151.4v13.8" stroke="#d6d6d6" stroke-width="0.6" stroke-dasharray="1.2 0.8"/>
<path d="M1007 152.6c3.4 0 5.6 2.6 5.6 6.6v5.6" fill="none" stroke="#9484c4" stroke-width="2"/>
<rect x="1008.2" y="171.6" width="7" height="13.8" fill="#c4c4c4"/><path d="M1011.7 171.6v13.8" stroke="#d6d6d6" stroke-width="0.6" stroke-dasharray="1.2 0.8"/>
<path d="M1020 173c-3.6 0-5.6 2.6-5.6 6.6v5.6" fill="none" stroke="#9484c4" stroke-width="2"/>
<rect x="1009.8" y="192.2" width="7.4" height="13.8" fill="#c4c4c4"/><path d="M1013.5 192.2v13.8" stroke="#d6d6d6" stroke-width="0.6" stroke-dasharray="1.2 0.8"/>
<rect x="1006.8" y="195.6" width="13.4" height="6.8" fill="#c4c4c4"/><path d="M1006.8 196.4a2.8 2.8 0 0 1 0 5.4zM1020.2 196.4a2.8 2.8 0 0 0 0 5.4z" fill="#9484c4"/>
<rect x="1009.2" y="212.4" width="8.6" height="13.8" fill="#c4c4c4"/><path d="M1013.5 212.4v13.8" stroke="#d6d6d6" stroke-width="0.6" stroke-dasharray="1.2 0.8"/>
<path d="M1010.2 216.4h6.6v2.2h-2v6h-2.6v-6h-2z" fill="#9484c4"/>
<path d="M34.6 534.6h2.4v-1.4h6v1.4h2.6l-5.6 5.8z" fill="#a9d3ab" stroke="#6fa877" stroke-width="0.7"/>
<path d="M18.6 543.2h31.4" stroke="#6fa877" stroke-width="0.9" stroke-dasharray="0.9 0.9"/>
<path d="M86 541v-7.4h2.4l4.6 4.6v2.8z" fill="#a9d3ab" stroke="#6fa877" stroke-width="0.7"/>
<path d="M70 543.2h31" stroke="#6fa877" stroke-width="0.9" stroke-dasharray="0.9 0.9"/>
<path d="M2 550.4h492M530 550.4h492" stroke="#c8c8c8" stroke-width="1" stroke-dasharray="0.8 1.6"/>
<rect x="495.6" y="547.8" width="32.8" height="4.8" rx="1.6" fill="#a6d4a6" stroke="#74b878" stroke-width="0.7"/><path d="M510.4 551.4l1.6-2.4 1.6 2.4z" fill="#fff"/>
<path d="M446.2 521.6v7.6M1016 521.6v7.6" stroke="#d6d6d6" stroke-width="0.7"/>
</svg>
</body>
</html>
